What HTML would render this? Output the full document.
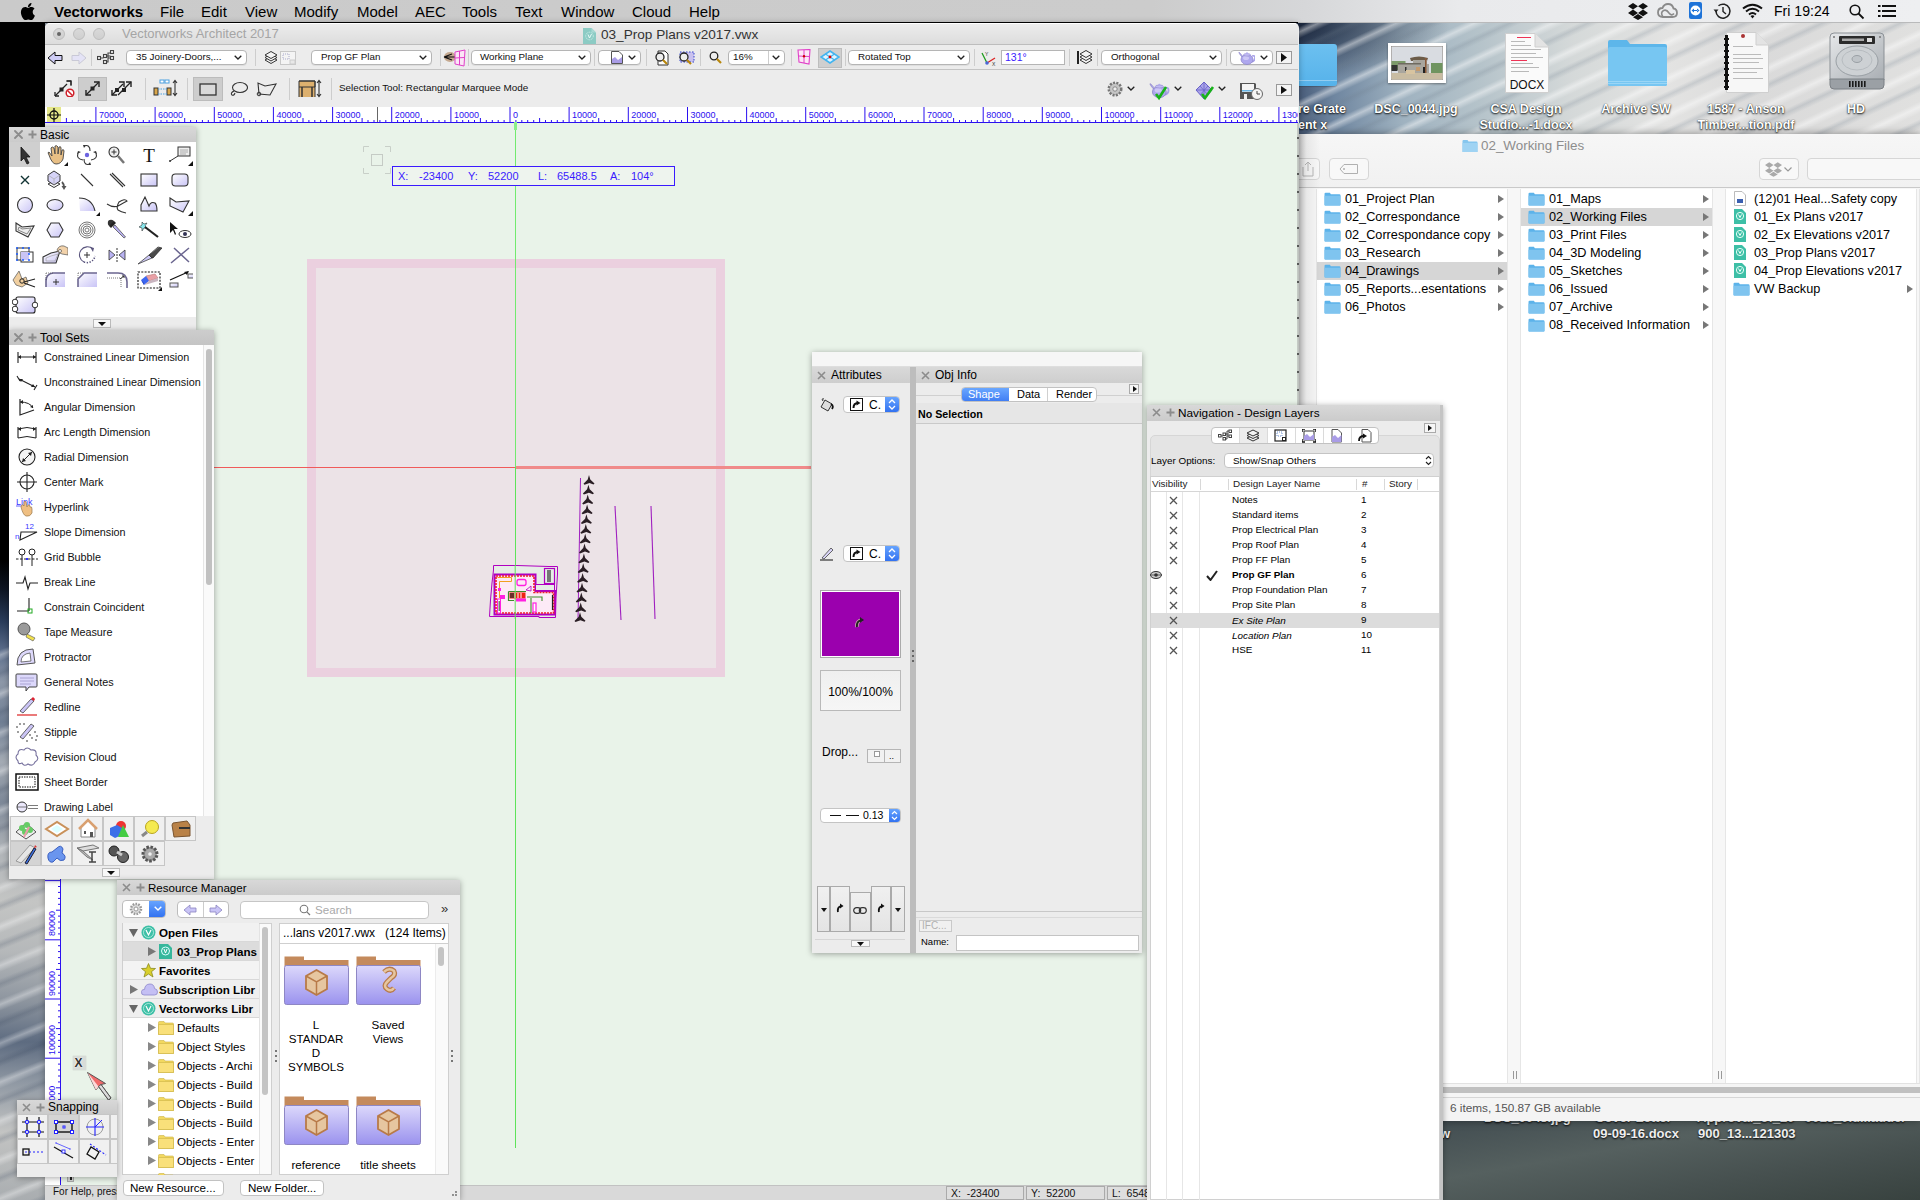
<!DOCTYPE html>
<html><head><meta charset="utf-8">
<style>
*{margin:0;padding:0;box-sizing:border-box}
html,body{width:1920px;height:1200px;overflow:hidden}
body{position:relative;font-family:"Liberation Sans",sans-serif;font-size:12px;color:#000;background:#6f7b86}
.a{position:absolute}
.t{position:absolute;white-space:nowrap;line-height:1}
.pal{position:absolute;background:#ececec;box-shadow:0 1px 6px rgba(0,0,0,.35);overflow:hidden}
.pt{position:absolute;left:0;top:0;right:0;height:15px;background:linear-gradient(#d8d8d8,#cbcbcb)}
.pt .x{position:absolute;left:5px;top:3px}
.pt .p{position:absolute;left:19px;top:3px}
.pt .n{position:absolute;left:31px;top:1px;font-size:12px;line-height:14px;white-space:nowrap}
.pop{position:absolute;background:#fff;border:1px solid #b5b5b5;border-radius:4px;box-shadow:0 1px 0 rgba(0,0,0,.06);font-size:11px;line-height:12px;white-space:nowrap}
.chev{position:absolute;width:6px;height:6px;border-right:1.4px solid #222;border-bottom:1.4px solid #222;transform:rotate(45deg)}
.sep{position:absolute;width:1px;background:#cfcfcf}
</style></head><body>

<!-- DESKTOP -->
<div class="a" style="left:0;top:0;width:1920px;height:1200px;background:linear-gradient(180deg,#8f9aa5 0%,#7f8b96 50%,#58646c 100%)"></div>
<div class="a" style="left:0;top:22px;width:45px;height:1178px;background:linear-gradient(180deg,#000 0px,#000 538px,#0e1624 568px,#2a3d5c 600px,#5d6f8c 630px,#8d98a8 660px,#6f7e93 700px,#a4abb4 740px,#7d8898 780px,#b0b4b8 830px,#c4c5c4 880px,#b5b8ba 930px,#8c949e 980px,#5d6b80 1020px,#8f98a3 1060px,#c3c4c3 1110px,#a9adb0 1178px)"></div>
<div class="a" style="left:0;top:640px;width:45px;height:560px;background:repeating-linear-gradient(158deg,rgba(255,255,255,0) 0px,rgba(255,255,255,0) 9px,rgba(255,255,255,.35) 14px,rgba(255,255,255,0) 20px,rgba(40,55,80,0) 26px,rgba(40,55,80,.18) 31px,rgba(40,55,80,0) 36px)"></div>
<!-- top right desktop clouds -->
<div class="a" style="left:1290px;top:22px;width:630px;height:115px;background:linear-gradient(90deg,#3f5270 0%,#6f86a0 7%,#9fb2c0 18%,#b5c3ca 30%,#d5d9d9 45%,#e3e3e2 60%,#dadada 75%,#e0e0df 100%)"></div>
<div class="a" style="left:1290px;top:22px;width:630px;height:115px;background:radial-gradient(ellipse 160px 60px at 0 0,rgba(15,25,45,.85),rgba(15,25,45,0))"></div>
<div class="a" style="left:1290px;top:22px;width:630px;height:115px;background:repeating-linear-gradient(155deg,rgba(255,255,255,0) 0px,rgba(255,255,255,0) 8px,rgba(255,255,255,.45) 13px,rgba(255,255,255,0) 19px,rgba(110,125,140,0) 24px,rgba(110,125,140,.22) 28px,rgba(110,125,140,0) 33px)"></div>
<!-- bottom right desktop dark -->
<div class="a" style="left:1440px;top:1110px;width:480px;height:90px;background:linear-gradient(170deg,#3f4a4f 0%,#55605f 40%,#46504f 70%,#38423f 100%)"></div>
<div class="t" style="left:1593px;top:1127px;font-size:13px;font-weight:bold;color:#eee;text-shadow:0 1px 2px #000">09-09-16.docx</div>
<div class="t" style="left:1698px;top:1127px;font-size:13px;font-weight:bold;color:#eee;text-shadow:0 1px 2px #000">900_13...121303</div>
<div class="t" style="left:1440px;top:1127px;font-size:13px;font-weight:bold;color:#eee;text-shadow:0 1px 2px #000">w</div>
<div class="t" style="left:1484px;top:1111px;font-size:13px;font-weight:bold;color:#eee;text-shadow:0 1px 2px #000">DSC_0045.jpg</div>
<div class="t" style="left:1595px;top:1111px;font-size:13px;font-weight:bold;color:#eee;text-shadow:0 1px 2px #000">Cover Letter</div>
<div class="t" style="left:1697px;top:1111px;font-size:13px;font-weight:bold;color:#eee;text-shadow:0 1px 2px #000">Approval_of_20</div>
<div class="t" style="left:1805px;top:1111px;font-size:13px;font-weight:bold;color:#eee;text-shadow:0 1px 2px #000">0013_0lu..ladder</div>

<!-- MENU BAR -->
<div class="a" style="left:0;top:0;width:1920px;height:22px;background:linear-gradient(90deg,#cacaca 0%,#cccccc 60%,#d6d7d9 68%,#e9eaec 76%,#eeeff1 100%)"></div>
<div class="a" style="left:0;top:22px;width:1298px;height:1px;background:#000"></div>
<div class="a" style="left:1298px;top:22px;width:622px;height:1px;background:#b9babb"></div>
<svg class="a" style="left:20px;top:3px" width="16" height="17" viewBox="0 0 170 200"><path d="M140 106c0-25 21-37 22-38-12-17-30-20-37-20-16-2-31 9-39 9-8 0-20-9-34-9-17 0-33 10-42 26-18 31-5 77 13 102 9 12 19 26 32 26 13-1 18-8 33-8 16 0 20 8 34 8 14 0 23-13 31-25 10-14 14-28 14-29-1 0-27-10-27-42zM115 32c7-9 12-21 11-33-10 0-23 7-30 16-7 8-13 20-11 32 12 1 23-6 30-15z" fill="#000"/></svg>
<div class="t" style="left:54px;top:4px;font-size:15px;font-weight:bold">Vectorworks</div>
<div class="t" style="left:160px;top:4px;font-size:15px">File</div>
<div class="t" style="left:201px;top:4px;font-size:15px">Edit</div>
<div class="t" style="left:245px;top:4px;font-size:15px">View</div>
<div class="t" style="left:294px;top:4px;font-size:15px">Modify</div>
<div class="t" style="left:357px;top:4px;font-size:15px">Model</div>
<div class="t" style="left:415px;top:4px;font-size:15px">AEC</div>
<div class="t" style="left:462px;top:4px;font-size:15px">Tools</div>
<div class="t" style="left:515px;top:4px;font-size:15px">Text</div>
<div class="t" style="left:561px;top:4px;font-size:15px">Window</div>
<div class="t" style="left:632px;top:4px;font-size:15px">Cloud</div>
<div class="t" style="left:689px;top:4px;font-size:15px">Help</div>
<!-- status icons -->
<svg class="a" style="left:1628px;top:3px" width="20" height="17" viewBox="0 0 20 17"><path d="M5 0 L0 3.3 L5 6.6 L10 3.3Z M15 0 L10 3.3 L15 6.6 L20 3.3Z M0 10 L5 13.3 L10 10 L5 6.6Z M10 10 L15 13.3 L20 10 L15 6.6Z M5 14.3 L10 17 L15 14.3 L10 11Z" fill="#111"/></svg>
<svg class="a" style="left:1657px;top:3px" width="21" height="16" viewBox="0 0 21 16"><path d="M6 14 Q1 14 1 9.5 Q1 5 5.5 5 Q7 1 11 1 Q15.5 1 16.5 5.5 Q20 6 20 10 Q20 14 15.5 14Z" fill="none" stroke="#8a8a8a" stroke-width="1.8"/><path d="M6 14 Q3 9.5 6.5 7.5 Q9.5 6 12 10 Q14.5 13.5 17 10.5" fill="none" stroke="#8a8a8a" stroke-width="1.6"/></svg>
<svg class="a" style="left:1689px;top:2px" width="14" height="18" viewBox="0 0 14 18"><rect x="0" y="0" width="13" height="17" rx="2" fill="#1e73d8"/><ellipse cx="6.5" cy="8.5" rx="5" ry="5" fill="#fff"/><path d="M2.5 8.5 L5 6.5 V10.5Z M10.5 8.5 L8 6.5 V10.5Z M4.5 8 H8.5 V9 H4.5Z" fill="#1e73d8"/></svg>
<svg class="a" style="left:1712px;top:2px" width="20" height="18" viewBox="0 0 20 18"><path d="M4 9 A7 7 0 1 0 6.5 3.8" fill="none" stroke="#222" stroke-width="1.5"/><path d="M1.5 7.5 L4 10.5 L6.5 7.5Z" fill="#222"/><path d="M11 5 V9.5 L14 12" fill="none" stroke="#222" stroke-width="1.4"/></svg>
<svg class="a" style="left:1742px;top:3px" width="21" height="16" viewBox="0 0 21 16"><path d="M1 5.5 Q10.5 -2 20 5.5" fill="none" stroke="#111" stroke-width="2"/><path d="M4 8.5 Q10.5 3 17 8.5" fill="none" stroke="#111" stroke-width="2"/><path d="M7 11.5 Q10.5 8.5 14 11.5" fill="none" stroke="#111" stroke-width="2"/><path d="M8.5 13 L10.5 15.5 L12.5 13 Q10.5 11.5 8.5 13Z" fill="#111"/></svg>
<div class="t" style="left:1774px;top:4px;font-size:14.1px">Fri 19:24</div>
<svg class="a" style="left:1849px;top:4px" width="16" height="16" viewBox="0 0 16 16"><circle cx="6" cy="6" r="4.8" fill="none" stroke="#111" stroke-width="1.6"/><path d="M9.5 9.5 L14.5 14.5" stroke="#111" stroke-width="1.8"/></svg>
<svg class="a" style="left:1878px;top:5px" width="20" height="12" viewBox="0 0 20 12"><rect x="0" y="0" width="2.5" height="2" fill="#111"/><rect x="4" y="0" width="14" height="2" fill="#111"/><rect x="0" y="5" width="2.5" height="2" fill="#111"/><rect x="4" y="5" width="14" height="2" fill="#111"/><rect x="0" y="10" width="2.5" height="2" fill="#111"/><rect x="4" y="10" width="14" height="2" fill="#111"/></svg>

<!-- DESKTOP ICONS TOP RIGHT -->
<div class="a" style="left:1298px;top:44px;width:39px;height:42px;background:linear-gradient(#6cc0f0,#56b2ea);border-radius:0 3px 3px 0;box-shadow:0 1px 1px rgba(0,0,0,.2)"></div>
<div class="a" style="left:1298px;top:80px;width:39px;height:1px;background:rgba(255,255,255,.35)"></div>
<div class="a" style="left:1388px;top:43px;width:58px;height:40px;background:#fff;box-shadow:0 1px 2px rgba(0,0,0,.4)"></div>
<svg class="a" style="left:1391px;top:46px" width="52" height="34" viewBox="0 0 52 34"><rect x="0" y="0" width="52" height="34" fill="#8a857c"/><rect x="0.5" y="0.5" width="51" height="33" fill="#d9dce1"/><rect x="0.5" y="15" width="14" height="9" fill="#7c9a6a"/><rect x="40" y="17" width="11.5" height="10" fill="#6f9460"/><path d="M19 12 Q28 9 37 12 L36 15 L20 15Z" fill="#6c5c48"/><rect x="22" y="14" width="14" height="9" fill="#a8a59d"/><rect x="7" y="18" width="31" height="10" fill="#a9a69e"/><rect x="7" y="17" width="23" height="1.5" fill="#6f6a60"/><rect x="14" y="21" width="1.5" height="4" fill="#333"/><rect x="32" y="21" width="2" height="6" fill="#222"/><rect x="25" y="21" width="4" height="4" fill="#c49a6c"/><rect x="34" y="12" width="1.5" height="15" fill="#8a5a3a"/><rect x="0.5" y="19" width="6" height="6" fill="#333"/><rect x="0.5" y="27" width="51" height="6.5" fill="#c9bca2"/><rect x="15" y="24" width="9" height="4" fill="#d8c4a0"/></svg>
<svg class="a" style="left:1505px;top:33px" width="44" height="60" viewBox="0 0 44 60"><path d="M0.5 0.5 H30 L43.5 14 V59.5 H0.5Z" fill="#fafafa" stroke="#cfcfcf"/><path d="M30 0.5 V14 H43.5" fill="#e3e3e3" stroke="#cfcfcf"/><g fill="#b9b9b9"><rect x="6" y="8" width="14" height="1"/><rect x="6" y="12" width="20" height="1"/><rect x="6" y="16" width="30" height="1"/><rect x="6" y="20" width="25" height="1"/><rect x="6" y="24" width="32" height="1"/><rect x="6" y="30" width="22" height="1"/><rect x="6" y="34" width="28" height="1"/><rect x="6" y="38" width="18" height="1"/></g><rect x="12" y="4" width="14" height="1" fill="#e35"/><rect x="6" y="27" width="16" height="1" fill="#e35"/><text x="22" y="56" font-size="12" text-anchor="middle" font-family="Liberation Sans" fill="#111">DOCX</text></svg>
<svg class="a" style="left:1607px;top:39px" width="61" height="48" viewBox="0 0 61 48"><path d="M1 3 Q1 1 3 1 H20 L23 5 H58 Q60 5 60 7 V45 Q60 47 58 47 H3 Q1 47 1 45Z" fill="#5db6ea"/><path d="M1 10 Q1 8 3 8 H58 Q60 8 60 10 V45 Q60 47 58 47 H3 Q1 47 1 45Z" fill="#77c6f2"/><rect x="1" y="42" width="59" height="1" fill="#9ad6f6"/><rect x="1" y="44" width="59" height="1" fill="#9ad6f6"/></svg>
<svg class="a" style="left:1724px;top:32px" width="45" height="61" viewBox="0 0 45 61"><path d="M2.5 0.5 H32 L44.5 13 V60.5 H2.5Z" fill="#f7f7f7" stroke="#cfcfcf"/><path d="M32 0.5 V13 H44.5" fill="#e3e3e3" stroke="#cfcfcf"/><rect x="1" y="3" width="3" height="55" fill="#111"/><g fill="#111"><rect x="0" y="6" width="5" height="2"/><rect x="0" y="12" width="5" height="2"/><rect x="0" y="18" width="5" height="2"/><rect x="0" y="24" width="5" height="2"/><rect x="0" y="30" width="5" height="2"/><rect x="0" y="36" width="5" height="2"/><rect x="0" y="42" width="5" height="2"/><rect x="0" y="48" width="5" height="2"/><rect x="0" y="54" width="5" height="2"/></g><g fill="#bbb"><rect x="9" y="14" width="20" height="1"/><rect x="9" y="22" width="28" height="1"/><rect x="9" y="26" width="30" height="1"/><rect x="9" y="30" width="26" height="1"/><rect x="9" y="36" width="30" height="1"/><rect x="9" y="40" width="24" height="1"/><rect x="9" y="46" width="30" height="1"/></g><circle cx="19" cy="4" r="2" fill="#a33"/></svg>
<svg class="a" style="left:1829px;top:32px" width="56" height="58" viewBox="0 0 56 58"><defs><linearGradient id="hdg" x1="0" y1="0" x2="1" y2="1"><stop offset="0" stop-color="#e6e8ea"/><stop offset="1" stop-color="#a9aeb3"/></linearGradient></defs><path d="M5 1 H51 Q55 1 55 5 V48 H1 V5 Q1 1 5 1Z" fill="url(#hdg)" stroke="#8b9095"/><path d="M1 47 H55 V53 Q55 57 51 57 H5 Q1 57 1 53Z" fill="#9ba0a5" stroke="#7b8085"/><rect x="10" y="4" width="36" height="8" rx="1" fill="#2b2b2b"/><rect x="13" y="6.5" width="22" height="2.5" fill="#aaa"/><rect x="38" y="6" width="5" height="4" fill="#ddd"/><ellipse cx="28" cy="29" rx="21" ry="15" fill="#cdd1d4" stroke="#9aa0a5"/><ellipse cx="28" cy="28" rx="15" ry="10" fill="none" stroke="#b7bcc0"/><ellipse cx="28" cy="27" rx="5" ry="3.5" fill="#bfc4c8" stroke="#9aa0a5"/><g fill="#1a1a1a"><rect x="20" y="49" width="1.6" height="6"/><rect x="23" y="49" width="1.6" height="6"/><rect x="26" y="49" width="1.6" height="6"/><rect x="29" y="49" width="1.6" height="6"/><rect x="32" y="49" width="1.6" height="6"/><rect x="35" y="49" width="1.6" height="6"/></g><circle cx="5" cy="5" r="1" fill="#777"/><circle cx="51" cy="5" r="1" fill="#777"/></svg>
<div class="t" style="left:1298px;top:103px;color:#fff;font-weight:bold;font-size:12.5px;text-shadow:0 1px 2px rgba(0,0,0,.9),0 0 1px rgba(0,0,0,.8)">re Grate</div>
<div class="t" style="left:1298px;top:119px;color:#fff;font-weight:bold;font-size:12.5px;text-shadow:0 1px 2px rgba(0,0,0,.9),0 0 1px rgba(0,0,0,.8)">ent x</div>
<div class="t" style="left:1316px;top:103px;width:200px;text-align:center;color:#fff;font-weight:bold;font-size:12.5px;text-shadow:0 1px 2px rgba(0,0,0,.9),0 0 1px rgba(0,0,0,.8)">DSC_0044.jpg</div>
<div class="t" style="left:1426px;top:103px;width:200px;text-align:center;color:#fff;font-weight:bold;font-size:12.5px;text-shadow:0 1px 2px rgba(0,0,0,.9),0 0 1px rgba(0,0,0,.8)">CSA Design</div>
<div class="t" style="left:1426px;top:119px;width:200px;text-align:center;color:#fff;font-weight:bold;font-size:12.5px;text-shadow:0 1px 2px rgba(0,0,0,.9),0 0 1px rgba(0,0,0,.8)">Studio...-1.docx</div>
<div class="t" style="left:1536px;top:103px;width:200px;text-align:center;color:#fff;font-weight:bold;font-size:12.5px;text-shadow:0 1px 2px rgba(0,0,0,.9),0 0 1px rgba(0,0,0,.8)">Archive SW</div>
<div class="t" style="left:1646px;top:103px;width:200px;text-align:center;color:#fff;font-weight:bold;font-size:12.5px;text-shadow:0 1px 2px rgba(0,0,0,.9),0 0 1px rgba(0,0,0,.8)">1587 - Anson</div>
<div class="t" style="left:1646px;top:119px;width:200px;text-align:center;color:#fff;font-weight:bold;font-size:12.5px;text-shadow:0 1px 2px rgba(0,0,0,.9),0 0 1px rgba(0,0,0,.8)">Timber...tion.pdf</div>
<div class="t" style="left:1756px;top:103px;width:200px;text-align:center;color:#fff;font-weight:bold;font-size:12.5px;text-shadow:0 1px 2px rgba(0,0,0,.9),0 0 1px rgba(0,0,0,.8)">HD</div>
<!-- FINDER -->
<div class="a" style="left:1298px;top:134px;width:622px;height:987px;background:#f6f6f6;box-shadow:0 0 8px rgba(0,0,0,.4)">
<div class="a" style="left:0;top:0;width:622px;height:54px;background:linear-gradient(#f6f6f6,#f1f1f1);border-bottom:1px solid #c9c9c9"></div>
<svg class="a" style="left:164px;top:5px" width="16" height="14" viewBox="0 0 16 13"><path d="M0.5 1.5 Q0.5 0.5 1.5 0.5 H5.5 L6.5 2 H14.5 Q15.5 2 15.5 3 V12 Q15.5 12.5 15 12.5 H1 Q0.5 12.5 0.5 12Z" fill="#86c6ee"/><path d="M0.5 3.5 H15.5 V12 Q15.5 12.5 15 12.5 H1 Q0.5 12.5 0.5 12Z" fill="#9fd3f3"/></svg>
<div class="t" style="left:183px;top:5px;font-size:13.4px;color:#8d8d8d">02_Working Files</div>
<div class="a" style="left:-10px;top:24px;width:32px;height:22px;border:1px solid #d6d6d6;border-radius:4px;background:#f8f8f8"></div>
<svg class="a" style="left:4px;top:27px" width="12" height="16" viewBox="0 0 12 16"><path d="M1 6 V15 H11 V6" fill="none" stroke="#b8b8b8"/><path d="M6 1 V10 M3 4 L6 1 L9 4" fill="none" stroke="#b8b8b8"/></svg>
<div class="a" style="left:31px;top:24px;width:40px;height:22px;border:1px solid #d6d6d6;border-radius:4px;background:#f8f8f8"></div>
<svg class="a" style="left:41px;top:29px" width="20" height="12" viewBox="0 0 20 12"><path d="M5 1.5 H18.5 V10.5 H5 L1 6Z" fill="none" stroke="#b0b0b0" stroke-width="1"/><circle cx="5" cy="6" r="1" fill="#b0b0b0"/></svg>
<div class="a" style="left:461px;top:24px;width:40px;height:22px;border:1px solid #d6d6d6;border-radius:4px;background:#f8f8f8"></div>
<svg class="a" style="left:467px;top:28px" width="17" height="15" viewBox="0 0 20 17"><path d="M5 0 L0 3.3 L5 6.6 L10 3.3Z M15 0 L10 3.3 L15 6.6 L20 3.3Z M0 10 L5 13.3 L10 10 L5 6.6Z M10 10 L15 13.3 L20 10 L15 6.6Z M5 14.3 L10 17 L15 14.3 L10 11Z" fill="#a9a9a9"/></svg>
<svg class="a" style="left:486px;top:33px" width="8" height="5" viewBox="0 0 8 5"><path d="M0.5 0.5 L4 4 L7.5 0.5" fill="none" stroke="#999" stroke-width="1.2"/></svg>
<div class="a" style="left:509px;top:24px;width:130px;height:22px;border:1px solid #d6d6d6;border-radius:4px;background:#f8f8f8"></div>
<div class="a" style="left:0;top:55px;width:622px;height:894px;background:#fff"></div>
<div class="a" style="left:0px;top:55px;width:19px;height:894px;background:#f7f7f7;border-left:1px solid #e6e6e6;border-right:1px solid #e6e6e6"></div>
<div class="a" style="left:209px;top:55px;width:14px;height:894px;background:#f7f7f7;border-left:1px solid #e6e6e6;border-right:1px solid #e6e6e6"></div>
<div class="a" style="left:414px;top:55px;width:14px;height:894px;background:#f7f7f7;border-left:1px solid #e6e6e6;border-right:1px solid #e6e6e6"></div>
<div class="a" style="left:618px;top:55px;width:4px;height:894px;background:#f7f7f7;border-left:1px solid #e6e6e6;border-right:1px solid #e6e6e6"></div>
<div class="a" style="left:215px;top:937px;width:1px;height:8px;background:#999"></div><div class="a" style="left:218px;top:937px;width:1px;height:8px;background:#999"></div>
<div class="a" style="left:420px;top:937px;width:1px;height:8px;background:#999"></div><div class="a" style="left:423px;top:937px;width:1px;height:8px;background:#999"></div>
<div class="a" style="left:0;top:949px;width:622px;height:14px;background:#f5f5f5;border-top:1px solid #e2e2e2"></div>
<div class="a" style="left:0;top:953px;width:622px;height:6px;background:#c0c0c0"></div>
<div class="a" style="left:0;top:963px;width:622px;height:24px;background:#f4f4f4;border-top:1px solid #d6d6d6"></div>
<div class="t" style="left:152px;top:969px;font-size:11.8px;color:#555">6 items, 150.87 GB available</div>
<svg class="a" style="left:26px;top:58px" width="17" height="14" viewBox="0 0 16 13"><path d="M0.5 1.5 Q0.5 0.5 1.5 0.5 H5.5 L6.5 2 H14.5 Q15.5 2 15.5 3 V12 Q15.5 12.5 15 12.5 H1 Q0.5 12.5 0.5 12Z" fill="#5cb3ea"/><path d="M0.5 3.5 H15.5 V12 Q15.5 12.5 15 12.5 H1 Q0.5 12.5 0.5 12Z" fill="#7fc4ef"/></svg>
<div class="t" style="left:47px;top:59px;font-size:12.7px">01_Project Plan</div>
<svg class="a" style="left:200px;top:61px" width="6" height="8" viewBox="0 0 6 8"><path d="M0 0 L6 4 L0 8Z" fill="#777"/></svg>
<svg class="a" style="left:26px;top:76px" width="17" height="14" viewBox="0 0 16 13"><path d="M0.5 1.5 Q0.5 0.5 1.5 0.5 H5.5 L6.5 2 H14.5 Q15.5 2 15.5 3 V12 Q15.5 12.5 15 12.5 H1 Q0.5 12.5 0.5 12Z" fill="#5cb3ea"/><path d="M0.5 3.5 H15.5 V12 Q15.5 12.5 15 12.5 H1 Q0.5 12.5 0.5 12Z" fill="#7fc4ef"/></svg>
<div class="t" style="left:47px;top:77px;font-size:12.7px">02_Correspondance</div>
<svg class="a" style="left:200px;top:79px" width="6" height="8" viewBox="0 0 6 8"><path d="M0 0 L6 4 L0 8Z" fill="#777"/></svg>
<svg class="a" style="left:26px;top:94px" width="17" height="14" viewBox="0 0 16 13"><path d="M0.5 1.5 Q0.5 0.5 1.5 0.5 H5.5 L6.5 2 H14.5 Q15.5 2 15.5 3 V12 Q15.5 12.5 15 12.5 H1 Q0.5 12.5 0.5 12Z" fill="#5cb3ea"/><path d="M0.5 3.5 H15.5 V12 Q15.5 12.5 15 12.5 H1 Q0.5 12.5 0.5 12Z" fill="#7fc4ef"/></svg>
<div class="t" style="left:47px;top:95px;font-size:12.7px">02_Correspondance copy</div>
<svg class="a" style="left:200px;top:97px" width="6" height="8" viewBox="0 0 6 8"><path d="M0 0 L6 4 L0 8Z" fill="#777"/></svg>
<svg class="a" style="left:26px;top:112px" width="17" height="14" viewBox="0 0 16 13"><path d="M0.5 1.5 Q0.5 0.5 1.5 0.5 H5.5 L6.5 2 H14.5 Q15.5 2 15.5 3 V12 Q15.5 12.5 15 12.5 H1 Q0.5 12.5 0.5 12Z" fill="#5cb3ea"/><path d="M0.5 3.5 H15.5 V12 Q15.5 12.5 15 12.5 H1 Q0.5 12.5 0.5 12Z" fill="#7fc4ef"/></svg>
<div class="t" style="left:47px;top:113px;font-size:12.7px">03_Research</div>
<svg class="a" style="left:200px;top:115px" width="6" height="8" viewBox="0 0 6 8"><path d="M0 0 L6 4 L0 8Z" fill="#777"/></svg>
<div class="a" style="left:19px;top:128px;width:190px;height:18px;background:#d6d6d6"></div>
<svg class="a" style="left:26px;top:130px" width="17" height="14" viewBox="0 0 16 13"><path d="M0.5 1.5 Q0.5 0.5 1.5 0.5 H5.5 L6.5 2 H14.5 Q15.5 2 15.5 3 V12 Q15.5 12.5 15 12.5 H1 Q0.5 12.5 0.5 12Z" fill="#5cb3ea"/><path d="M0.5 3.5 H15.5 V12 Q15.5 12.5 15 12.5 H1 Q0.5 12.5 0.5 12Z" fill="#7fc4ef"/></svg>
<div class="t" style="left:47px;top:131px;font-size:12.7px">04_Drawings</div>
<svg class="a" style="left:200px;top:133px" width="6" height="8" viewBox="0 0 6 8"><path d="M0 0 L6 4 L0 8Z" fill="#777"/></svg>
<svg class="a" style="left:26px;top:148px" width="17" height="14" viewBox="0 0 16 13"><path d="M0.5 1.5 Q0.5 0.5 1.5 0.5 H5.5 L6.5 2 H14.5 Q15.5 2 15.5 3 V12 Q15.5 12.5 15 12.5 H1 Q0.5 12.5 0.5 12Z" fill="#5cb3ea"/><path d="M0.5 3.5 H15.5 V12 Q15.5 12.5 15 12.5 H1 Q0.5 12.5 0.5 12Z" fill="#7fc4ef"/></svg>
<div class="t" style="left:47px;top:149px;font-size:12.7px">05_Reports...esentations</div>
<svg class="a" style="left:200px;top:151px" width="6" height="8" viewBox="0 0 6 8"><path d="M0 0 L6 4 L0 8Z" fill="#777"/></svg>
<svg class="a" style="left:26px;top:166px" width="17" height="14" viewBox="0 0 16 13"><path d="M0.5 1.5 Q0.5 0.5 1.5 0.5 H5.5 L6.5 2 H14.5 Q15.5 2 15.5 3 V12 Q15.5 12.5 15 12.5 H1 Q0.5 12.5 0.5 12Z" fill="#5cb3ea"/><path d="M0.5 3.5 H15.5 V12 Q15.5 12.5 15 12.5 H1 Q0.5 12.5 0.5 12Z" fill="#7fc4ef"/></svg>
<div class="t" style="left:47px;top:167px;font-size:12.7px">06_Photos</div>
<svg class="a" style="left:200px;top:169px" width="6" height="8" viewBox="0 0 6 8"><path d="M0 0 L6 4 L0 8Z" fill="#777"/></svg>
<svg class="a" style="left:230px;top:58px" width="17" height="14" viewBox="0 0 16 13"><path d="M0.5 1.5 Q0.5 0.5 1.5 0.5 H5.5 L6.5 2 H14.5 Q15.5 2 15.5 3 V12 Q15.5 12.5 15 12.5 H1 Q0.5 12.5 0.5 12Z" fill="#5cb3ea"/><path d="M0.5 3.5 H15.5 V12 Q15.5 12.5 15 12.5 H1 Q0.5 12.5 0.5 12Z" fill="#7fc4ef"/></svg>
<div class="t" style="left:251px;top:59px;font-size:12.7px">01_Maps</div>
<svg class="a" style="left:405px;top:61px" width="6" height="8" viewBox="0 0 6 8"><path d="M0 0 L6 4 L0 8Z" fill="#777"/></svg>
<div class="a" style="left:223px;top:74px;width:191px;height:18px;background:#d6d6d6"></div>
<svg class="a" style="left:230px;top:76px" width="17" height="14" viewBox="0 0 16 13"><path d="M0.5 1.5 Q0.5 0.5 1.5 0.5 H5.5 L6.5 2 H14.5 Q15.5 2 15.5 3 V12 Q15.5 12.5 15 12.5 H1 Q0.5 12.5 0.5 12Z" fill="#5cb3ea"/><path d="M0.5 3.5 H15.5 V12 Q15.5 12.5 15 12.5 H1 Q0.5 12.5 0.5 12Z" fill="#7fc4ef"/></svg>
<div class="t" style="left:251px;top:77px;font-size:12.7px">02_Working Files</div>
<svg class="a" style="left:405px;top:79px" width="6" height="8" viewBox="0 0 6 8"><path d="M0 0 L6 4 L0 8Z" fill="#777"/></svg>
<svg class="a" style="left:230px;top:94px" width="17" height="14" viewBox="0 0 16 13"><path d="M0.5 1.5 Q0.5 0.5 1.5 0.5 H5.5 L6.5 2 H14.5 Q15.5 2 15.5 3 V12 Q15.5 12.5 15 12.5 H1 Q0.5 12.5 0.5 12Z" fill="#5cb3ea"/><path d="M0.5 3.5 H15.5 V12 Q15.5 12.5 15 12.5 H1 Q0.5 12.5 0.5 12Z" fill="#7fc4ef"/></svg>
<div class="t" style="left:251px;top:95px;font-size:12.7px">03_Print Files</div>
<svg class="a" style="left:405px;top:97px" width="6" height="8" viewBox="0 0 6 8"><path d="M0 0 L6 4 L0 8Z" fill="#777"/></svg>
<svg class="a" style="left:230px;top:112px" width="17" height="14" viewBox="0 0 16 13"><path d="M0.5 1.5 Q0.5 0.5 1.5 0.5 H5.5 L6.5 2 H14.5 Q15.5 2 15.5 3 V12 Q15.5 12.5 15 12.5 H1 Q0.5 12.5 0.5 12Z" fill="#5cb3ea"/><path d="M0.5 3.5 H15.5 V12 Q15.5 12.5 15 12.5 H1 Q0.5 12.5 0.5 12Z" fill="#7fc4ef"/></svg>
<div class="t" style="left:251px;top:113px;font-size:12.7px">04_3D Modeling</div>
<svg class="a" style="left:405px;top:115px" width="6" height="8" viewBox="0 0 6 8"><path d="M0 0 L6 4 L0 8Z" fill="#777"/></svg>
<svg class="a" style="left:230px;top:130px" width="17" height="14" viewBox="0 0 16 13"><path d="M0.5 1.5 Q0.5 0.5 1.5 0.5 H5.5 L6.5 2 H14.5 Q15.5 2 15.5 3 V12 Q15.5 12.5 15 12.5 H1 Q0.5 12.5 0.5 12Z" fill="#5cb3ea"/><path d="M0.5 3.5 H15.5 V12 Q15.5 12.5 15 12.5 H1 Q0.5 12.5 0.5 12Z" fill="#7fc4ef"/></svg>
<div class="t" style="left:251px;top:131px;font-size:12.7px">05_Sketches</div>
<svg class="a" style="left:405px;top:133px" width="6" height="8" viewBox="0 0 6 8"><path d="M0 0 L6 4 L0 8Z" fill="#777"/></svg>
<svg class="a" style="left:230px;top:148px" width="17" height="14" viewBox="0 0 16 13"><path d="M0.5 1.5 Q0.5 0.5 1.5 0.5 H5.5 L6.5 2 H14.5 Q15.5 2 15.5 3 V12 Q15.5 12.5 15 12.5 H1 Q0.5 12.5 0.5 12Z" fill="#5cb3ea"/><path d="M0.5 3.5 H15.5 V12 Q15.5 12.5 15 12.5 H1 Q0.5 12.5 0.5 12Z" fill="#7fc4ef"/></svg>
<div class="t" style="left:251px;top:149px;font-size:12.7px">06_Issued</div>
<svg class="a" style="left:405px;top:151px" width="6" height="8" viewBox="0 0 6 8"><path d="M0 0 L6 4 L0 8Z" fill="#777"/></svg>
<svg class="a" style="left:230px;top:166px" width="17" height="14" viewBox="0 0 16 13"><path d="M0.5 1.5 Q0.5 0.5 1.5 0.5 H5.5 L6.5 2 H14.5 Q15.5 2 15.5 3 V12 Q15.5 12.5 15 12.5 H1 Q0.5 12.5 0.5 12Z" fill="#5cb3ea"/><path d="M0.5 3.5 H15.5 V12 Q15.5 12.5 15 12.5 H1 Q0.5 12.5 0.5 12Z" fill="#7fc4ef"/></svg>
<div class="t" style="left:251px;top:167px;font-size:12.7px">07_Archive</div>
<svg class="a" style="left:405px;top:169px" width="6" height="8" viewBox="0 0 6 8"><path d="M0 0 L6 4 L0 8Z" fill="#777"/></svg>
<svg class="a" style="left:230px;top:184px" width="17" height="14" viewBox="0 0 16 13"><path d="M0.5 1.5 Q0.5 0.5 1.5 0.5 H5.5 L6.5 2 H14.5 Q15.5 2 15.5 3 V12 Q15.5 12.5 15 12.5 H1 Q0.5 12.5 0.5 12Z" fill="#5cb3ea"/><path d="M0.5 3.5 H15.5 V12 Q15.5 12.5 15 12.5 H1 Q0.5 12.5 0.5 12Z" fill="#7fc4ef"/></svg>
<div class="t" style="left:251px;top:185px;font-size:12.7px">08_Received Information</div>
<svg class="a" style="left:405px;top:187px" width="6" height="8" viewBox="0 0 6 8"><path d="M0 0 L6 4 L0 8Z" fill="#777"/></svg>
<svg class="a" style="left:436px;top:57px" width="12" height="15" viewBox="0 0 12 15"><path d="M0.5 0.5 H8 L11.5 4 V14.5 H0.5Z" fill="#fff" stroke="#bbb"/><rect x="3" y="8" width="6" height="4" fill="#3a5fb0"/></svg>
<div class="t" style="left:456px;top:59px;font-size:12.7px">(12)01 Heal...Safety copy</div>
<svg class="a" style="left:436px;top:75px" width="12" height="15" viewBox="0 0 12 15"><path d="M0 0 H8 L12 4 V15 H0Z" fill="#3dbfa6"/><circle cx="6" cy="7" r="3.6" fill="none" stroke="#e8fff8" stroke-width="1"/><path d="M4.5 5.5 L6 8.5 L7.5 5.5" fill="none" stroke="#e8fff8" stroke-width="1"/></svg>
<div class="t" style="left:456px;top:77px;font-size:12.7px">01_Ex Plans v2017</div>
<svg class="a" style="left:436px;top:93px" width="12" height="15" viewBox="0 0 12 15"><path d="M0 0 H8 L12 4 V15 H0Z" fill="#3dbfa6"/><circle cx="6" cy="7" r="3.6" fill="none" stroke="#e8fff8" stroke-width="1"/><path d="M4.5 5.5 L6 8.5 L7.5 5.5" fill="none" stroke="#e8fff8" stroke-width="1"/></svg>
<div class="t" style="left:456px;top:95px;font-size:12.7px">02_Ex Elevations v2017</div>
<svg class="a" style="left:436px;top:111px" width="12" height="15" viewBox="0 0 12 15"><path d="M0 0 H8 L12 4 V15 H0Z" fill="#3dbfa6"/><circle cx="6" cy="7" r="3.6" fill="none" stroke="#e8fff8" stroke-width="1"/><path d="M4.5 5.5 L6 8.5 L7.5 5.5" fill="none" stroke="#e8fff8" stroke-width="1"/></svg>
<div class="t" style="left:456px;top:113px;font-size:12.7px">03_Prop Plans v2017</div>
<svg class="a" style="left:436px;top:129px" width="12" height="15" viewBox="0 0 12 15"><path d="M0 0 H8 L12 4 V15 H0Z" fill="#3dbfa6"/><circle cx="6" cy="7" r="3.6" fill="none" stroke="#e8fff8" stroke-width="1"/><path d="M4.5 5.5 L6 8.5 L7.5 5.5" fill="none" stroke="#e8fff8" stroke-width="1"/></svg>
<div class="t" style="left:456px;top:131px;font-size:12.7px">04_Prop Elevations v2017</div>
<svg class="a" style="left:435px;top:148px" width="17" height="14" viewBox="0 0 16 13"><path d="M0.5 1.5 Q0.5 0.5 1.5 0.5 H5.5 L6.5 2 H14.5 Q15.5 2 15.5 3 V12 Q15.5 12.5 15 12.5 H1 Q0.5 12.5 0.5 12Z" fill="#5cb3ea"/><path d="M0.5 3.5 H15.5 V12 Q15.5 12.5 15 12.5 H1 Q0.5 12.5 0.5 12Z" fill="#7fc4ef"/></svg>
<div class="t" style="left:456px;top:149px;font-size:12.7px">VW Backup</div>
<svg class="a" style="left:609px;top:151px" width="6" height="8" viewBox="0 0 6 8"><path d="M0 0 L6 4 L0 8Z" fill="#777"/></svg>
<div class="a" style="left:0;top:0;width:22px;height:987px;background:linear-gradient(90deg,rgba(0,0,0,.22),rgba(0,0,0,.06) 40%,rgba(0,0,0,0))"></div>
</div>
<!-- VW WINDOW -->
<div class="a" style="left:45px;top:23px;width:1254px;height:1177px;background:#ececec;border-radius:5px 5px 0 0;overflow:hidden;box-shadow:0 0 6px rgba(0,0,0,.3)">
<div class="a" style="left:0;top:0;width:1253px;height:22px;background:linear-gradient(#ececec,#dcdcdc);border-top:1px solid #fff"></div>
<div class="a" style="left:0;top:21px;width:1253px;height:1px;background:#bdbdbd"></div>
<div class="a" style="left:8px;top:4.5px;width:12px;height:12px;border-radius:50%;background:linear-gradient(#d9d9d9,#cfcfcf);border:1px solid #bdbdbd"></div>
<div class="a" style="left:28px;top:4.5px;width:12px;height:12px;border-radius:50%;background:linear-gradient(#d9d9d9,#cfcfcf);border:1px solid #bdbdbd"></div>
<div class="a" style="left:48px;top:4.5px;width:12px;height:12px;border-radius:50%;background:linear-gradient(#d9d9d9,#cfcfcf);border:1px solid #bdbdbd"></div>
<div class="a" style="left:12px;top:8.5px;width:4px;height:4px;border-radius:50%;background:#666"></div>
<div class="t" style="left:77px;top:4px;font-size:13px;color:#a5a5a5">Vectorworks Architect 2017</div>
<svg class="a" style="left:538px;top:5px" width="13" height="16" viewBox="0 0 13 16"><path d="M0 0 H8.5 L13 4.5 V16 H0Z" fill="#8ccbc4"/><path d="M8.5 0 V4.5 H13" fill="#a9d9d3"/><circle cx="6.5" cy="8" r="3.8" fill="none" stroke="#d8f3ef" stroke-width="0.8" stroke-dasharray="1 0.7"/><path d="M5 6.5 L6.5 10 L8.5 6" fill="none" stroke="#e9fbf8" stroke-width="1"/></svg>
<div class="t" style="left:556px;top:5px;font-size:13.6px;color:#333">03_Prop Plans v2017.vwx</div>
<div class="a" style="left:0;top:22px;width:1253px;height:25px;background:#ececec;border-bottom:1px solid #c4c4c4"></div>
<svg class="a" style="left:2px;top:28px" width="16" height="14" viewBox="0 0 16 14"><path d="M1 7 L8 1 V4.5 H15 V9.5 H8 V13Z" fill="#cfcdf6" stroke="#111" stroke-width="1"/></svg>
<svg class="a" style="left:26px;top:28px" width="16" height="14" viewBox="0 0 16 14"><path d="M15 7 L8 1 V4.5 H1 V9.5 H8 V13Z" fill="#e4e3f6" stroke="#c9c9d6" stroke-width="1"/></svg>
<div class="a" style="left:46px;top:26px;width:1px;height:17px;background:#cdcdcd"></div>
<svg class="a" style="left:52px;top:27px" width="18" height="16" viewBox="0 0 18 16"><g fill="none" stroke="#444" stroke-width="1.1"><rect x="0.5" y="6.5" width="3" height="3"/><rect x="6.5" y="4.5" width="3" height="3"/><rect x="6.5" y="10.5" width="3" height="3"/><rect x="13.5" y="0.5" width="3" height="3"/><rect x="13.5" y="6.5" width="3" height="3"/><path d="M3.5 8 H6.5 M9.5 6 H13.5 M9.5 12 H11 V3 H13.5 M11 8 H13.5"/></g></svg>
<div class="pop" style="left:81px;top:27px;width:121px;height:15px"></div><div class="t" style="left:91px;top:29px;font-size:9.8px;color:#111">35 Joinery-Doors,...</div><svg class="a" style="left:189px;top:32px" width="8" height="5" viewBox="0 0 8 5"><path d="M0.7 0.7 L4 4 L7.3 0.7" fill="none" stroke="#222" stroke-width="1.3"/></svg>
<div class="a" style="left:210px;top:26px;width:1px;height:17px;background:#cdcdcd"></div>
<svg class="a" style="left:219px;top:28px" width="14" height="14" viewBox="0 0 14 14"><g fill="#f4f4f4" stroke="#333" stroke-width="1"><path d="M1 9 L7 12.5 L13 9 L7 5.5Z"/><path d="M1 6.5 L7 10 L13 6.5 L7 3Z"/><path d="M1 4 L7 7.5 L13 4 L7 0.5Z"/></g></svg>
<svg class="a" style="left:235px;top:28px" width="16" height="14" viewBox="0 0 16 14"><rect x="0.5" y="0.5" width="15" height="13" fill="#f4f4f4" stroke="#c8c8c8"/><rect x="3" y="3" width="6" height="5" fill="none" stroke="#aac" stroke-dasharray="1 1"/><rect x="10" y="9" width="5" height="4" fill="#e8e8e8" stroke="#ccc"/></svg>
<div class="pop" style="left:266px;top:27px;width:121px;height:15px"></div><div class="t" style="left:276px;top:29px;font-size:9.8px;color:#111">Prop GF Plan</div><svg class="a" style="left:374px;top:32px" width="8" height="5" viewBox="0 0 8 5"><path d="M0.7 0.7 L4 4 L7.3 0.7" fill="none" stroke="#222" stroke-width="1.3"/></svg>
<div class="a" style="left:395px;top:26px;width:1px;height:17px;background:#cdcdcd"></div>
<svg class="a" style="left:398px;top:26px" width="24" height="18" viewBox="0 0 24 18"><ellipse cx="7" cy="8" rx="6" ry="5" fill="#b58d6a" opacity=".7"/><path d="M1 8 L9 5 M1 8 L9 11 M1 8 H16" stroke="#111" stroke-width="1.2" fill="none"/><path d="M12 3 L22 1 L21 17 L12 15Z" fill="#fbe6f6" stroke="#e040c8" stroke-width="1"/><path d="M12 9 L21.5 8.5 M16.5 2 V16" stroke="#e040c8" stroke-width="1"/></svg>
<div class="a" style="left:423px;top:26px;width:1px;height:17px;background:#cdcdcd"></div>
<div class="pop" style="left:426px;top:27px;width:120px;height:15px"></div><div class="t" style="left:435px;top:29px;font-size:9.8px;color:#111">Working Plane</div><svg class="a" style="left:533px;top:32px" width="8" height="5" viewBox="0 0 8 5"><path d="M0.7 0.7 L4 4 L7.3 0.7" fill="none" stroke="#222" stroke-width="1.3"/></svg>
<div class="a" style="left:549px;top:26px;width:1px;height:17px;background:#cdcdcd"></div>
<div class="pop" style="left:553px;top:27px;width:43px;height:15px"></div><svg class="a" style="left:583px;top:32px" width="8" height="5" viewBox="0 0 8 5"><path d="M0.7 0.7 L4 4 L7.3 0.7" fill="none" stroke="#222" stroke-width="1.3"/></svg>
<svg class="a" style="left:566px;top:28px" width="12" height="13" viewBox="0 0 12 13"><path d="M0.5 0.5 H8 L11.5 4 V12.5 H0.5Z" fill="#fff" stroke="#555"/><path d="M1 12 V8 L4 6 L7 9 L11 6 V12Z" fill="#a99ce6"/></svg>
<div class="a" style="left:601px;top:26px;width:1px;height:17px;background:#cdcdcd"></div>
<svg class="a" style="left:609px;top:27px" width="16" height="16" viewBox="0 0 16 16"><path d="M4 1 H11 L14 4 V15 H4Z" fill="#fff" stroke="#333"/><circle cx="6" cy="7" r="4" fill="#eee" stroke="#222" stroke-width="1.3"/><path d="M9 10 L13 14" stroke="#b8860b" stroke-width="2.2"/></svg>
<svg class="a" style="left:632px;top:27px" width="18" height="16" viewBox="0 0 18 16"><rect x="3" y="2" width="14" height="10" fill="#c9c1ef" stroke="#3344cc" stroke-dasharray="1.5 1.5"/><circle cx="7" cy="7" r="4" fill="#eee" stroke="#222" stroke-width="1.3"/><path d="M10 10 L14 14" stroke="#b8860b" stroke-width="2.2"/></svg>
<div class="a" style="left:655px;top:26px;width:1px;height:17px;background:#cdcdcd"></div>
<svg class="a" style="left:664px;top:28px" width="13" height="13" viewBox="0 0 13 13"><circle cx="5" cy="5" r="3.8" fill="#eee" stroke="#222" stroke-width="1.3"/><path d="M8 8 L12 12" stroke="#b8860b" stroke-width="2.2"/></svg>
<div class="pop" style="left:683px;top:27px;width:57px;height:15px"></div>
<div class="a" style="left:723px;top:28px;width:1px;height:13px;background:#cdcdcd"></div>
<div class="t" style="left:688px;top:29px;font-size:9.8px;color:#111">16%</div>
<svg class="a" style="left:727px;top:32px" width="8" height="5" viewBox="0 0 8 5"><path d="M0.7 0.7 L4 4 L7.3 0.7" fill="none" stroke="#222" stroke-width="1.3"/></svg>
<div class="a" style="left:746px;top:26px;width:1px;height:17px;background:#cdcdcd"></div>
<svg class="a" style="left:752px;top:26px" width="14" height="16" viewBox="0 0 14 16"><path d="M1 1 L13 0.5 L12 15 L2 13Z" fill="#fde8f7" stroke="#e040c8" stroke-width="1.1"/><path d="M1.5 7 L12.5 7.5 M7 1 V14" stroke="#e040c8" stroke-width="1"/><circle cx="7" cy="7.2" r="1.2" fill="#c00"/></svg>
<div class="a" style="left:773px;top:25px;width:24px;height:20px;background:#cfcfcf;border:1px solid #bdbdbd"></div>
<svg class="a" style="left:775px;top:27px" width="20" height="14" viewBox="0 0 20 14"><path d="M10 1 L19 7 L10 13 L1 7Z" fill="#dff4ff" stroke="#43b4f0" stroke-width="1.6"/><path d="M5.5 4 L14.5 10 M14.5 4 L5.5 10" stroke="#43b4f0" stroke-width="1.2"/><circle cx="10" cy="7" r="1.4" fill="#d00"/></svg>
<div class="a" style="left:800px;top:26px;width:1px;height:17px;background:#cdcdcd"></div>
<div class="pop" style="left:803px;top:27px;width:122px;height:15px"></div><div class="t" style="left:813px;top:29px;font-size:9.8px;color:#111">Rotated Top</div><svg class="a" style="left:912px;top:32px" width="8" height="5" viewBox="0 0 8 5"><path d="M0.7 0.7 L4 4 L7.3 0.7" fill="none" stroke="#222" stroke-width="1.3"/></svg>
<div class="a" style="left:929px;top:26px;width:1px;height:17px;background:#cdcdcd"></div>
<svg class="a" style="left:935px;top:28px" width="17" height="16" viewBox="0 0 17 16"><path d="M7 12 L2 2" stroke="#1a9b1a" stroke-width="1.3"/><path d="M7 12 L15 7" stroke="#d22" stroke-width="1.3"/><circle cx="7" cy="12" r="1.8" fill="#4a66d6"/><text x="5" y="5" font-size="5" fill="#333" font-family="Liberation Sans">Y</text><text x="12" y="15" font-size="5" fill="#333" font-family="Liberation Sans">X</text></svg>
<div class="a" style="left:956px;top:27px;width:64px;height:15px;background:#fff;border:1px solid #b5b5b5"></div>
<div class="t" style="left:960px;top:29px;font-size:10.5px;color:#3a1aff">131°</div>
<div class="a" style="left:1024px;top:26px;width:1px;height:17px;background:#cdcdcd"></div>
<svg class="a" style="left:1032px;top:27px" width="16" height="15" viewBox="0 0 16 15"><rect x="0" y="1" width="2" height="13" fill="#222"/><g fill="#f4f4f4" stroke="#333" stroke-width="1"><path d="M3 10 L9 13.5 L15 10 L9 6.5Z"/><path d="M3 7 L9 10.5 L15 7 L9 3.5Z"/><path d="M3 4 L9 7.5 L15 4 L9 0.5Z"/></g></svg>
<div class="a" style="left:1052px;top:26px;width:1px;height:17px;background:#cdcdcd"></div>
<div class="pop" style="left:1056px;top:27px;width:121px;height:15px"></div><div class="t" style="left:1066px;top:29px;font-size:9.8px;color:#111">Orthogonal</div><svg class="a" style="left:1164px;top:32px" width="8" height="5" viewBox="0 0 8 5"><path d="M0.7 0.7 L4 4 L7.3 0.7" fill="none" stroke="#222" stroke-width="1.3"/></svg>
<div class="a" style="left:1181px;top:26px;width:1px;height:17px;background:#cdcdcd"></div>
<div class="pop" style="left:1185px;top:27px;width:43px;height:15px"></div><svg class="a" style="left:1215px;top:32px" width="8" height="5" viewBox="0 0 8 5"><path d="M0.7 0.7 L4 4 L7.3 0.7" fill="none" stroke="#222" stroke-width="1.3"/></svg>
<svg class="a" style="left:1193px;top:27px" width="17" height="15" viewBox="0 0 17 15"><g transform="scale(1)"><path d="M4 7 Q2 5 1 3 Q0.5 2 1.5 2.5 Q3 4 4.5 6Z" fill="#b3acef" stroke="#8a83c8" stroke-width=".6"/><path d="M14 6 Q17 5 17 8 Q17 11 13.5 12" fill="none" stroke="#a9a2e8" stroke-width="1.6"/><ellipse cx="9" cy="9.5" rx="6" ry="5" fill="#aea7ee" stroke="#8a83c8" stroke-width=".7"/><ellipse cx="8" cy="8" rx="3" ry="2" fill="#d4d0f8" opacity=".8"/><ellipse cx="9" cy="4.8" rx="3.5" ry="1.3" fill="#c2bcf4" stroke="#8a83c8" stroke-width=".5"/><circle cx="9" cy="3.3" r="1" fill="#b3acef"/></g></svg>
<div class="a" style="left:1231px;top:28px;width:16px;height:13px;background:#f4f4f4;border:1px solid #999"></div>
<svg class="a" style="left:1236px;top:30px" width="6" height="9" viewBox="0 0 6 9"><path d="M0 0 L6 4.5 L0 9Z" fill="#111"/></svg>
<svg class="a" style="left:9px;top:57px" width="22" height="17" viewBox="0 0 22 17"><path d="M1 16 L13 4" stroke="#222" stroke-width="1.3"/><path d="M13 1 H17 V5 M1 16 V12 M1 16 H5" fill="none" stroke="#222" stroke-width="1.3"/><path d="M12 1 L17 1 L17 6" fill="none" stroke="#222"/><rect x="5.5" y="7.5" width="4" height="4" fill="#222"/><circle cx="16" cy="13" r="3.8" fill="#fff" stroke="#d0202a" stroke-width="1.5"/><path d="M13.5 10.5 L18.5 15.5" stroke="#d0202a" stroke-width="1.5"/></svg>
<div class="a" style="left:33px;top:54px;width:29px;height:24px;background:#cdcdcd;border:1px solid #bcbcbc"></div>
<svg class="a" style="left:39px;top:57px" width="17" height="17" viewBox="0 0 17 17"><path d="M2 15 L15 2" stroke="#222" stroke-width="1.3"/><path d="M10 2 H15 V7 M2 10 V15 H7" fill="none" stroke="#222" stroke-width="1.4"/><rect x="6.5" y="6.5" width="4" height="4" fill="#222"/></svg>
<svg class="a" style="left:65px;top:57px" width="23" height="17" viewBox="0 0 23 17"><path d="M2 15 L13 4 M8 15 L21 2" stroke="#222" stroke-width="1.3"/><path d="M9 2 H14 V7 M16 2 H21 V7 M2 10 V15 H7" fill="none" stroke="#222" stroke-width="1.4"/><rect x="5" y="8" width="4" height="4" fill="#222"/><rect x="12" y="8" width="4" height="4" fill="#222"/></svg>
<div class="a" style="left:100px;top:55px;width:1px;height:22px;background:#cdcdcd"></div>
<svg class="a" style="left:108px;top:56px" width="26" height="19" viewBox="0 0 26 19"><rect x="7" y="1" width="4" height="3" fill="#fff" stroke="#4aa0e0"/><rect x="12" y="1" width="4" height="3" fill="#fff" stroke="#4aa0e0"/><rect x="1" y="9" width="4" height="7" fill="#d9a64a" stroke="#333"/><rect x="14" y="9" width="4" height="7" fill="#d9a64a" stroke="#333"/><path d="M5 10 H14 M5 15 H14" stroke="#4aa0e0" stroke-dasharray="1.5 1"/><path d="M22 2 V16 M20 4 L22 1.5 L24 4 M20 14 L22 16.5 L24 14" fill="none" stroke="#333" stroke-width="1.1"/></svg>
<div class="a" style="left:142px;top:55px;width:1px;height:22px;background:#cdcdcd"></div>
<div class="a" style="left:148px;top:54px;width:30px;height:24px;background:#cdcdcd;border:1px solid #bcbcbc"></div>
<svg class="a" style="left:154px;top:60px" width="18" height="13" viewBox="0 0 18 13"><rect x="1" y="1" width="16" height="11" fill="#d9d9d9" stroke="#333" stroke-width="1.3"/></svg>
<svg class="a" style="left:184px;top:58px" width="19" height="16" viewBox="0 0 19 16"><ellipse cx="11" cy="6.5" rx="7.5" ry="5" fill="none" stroke="#333" stroke-width="1.1"/><path d="M5 10 Q1 12 3 14 Q5 15 6 12" fill="none" stroke="#333" stroke-width="1.1"/></svg>
<svg class="a" style="left:211px;top:57px" width="21" height="17" viewBox="0 0 21 17"><path d="M3 14 L2 3 L9 6 L20 4 L14 15 Z" fill="none" stroke="#333" stroke-width="1.1"/><circle cx="3" cy="14" r="1.8" fill="none" stroke="#333"/></svg>
<div class="a" style="left:244px;top:55px;width:1px;height:22px;background:#cdcdcd"></div>
<svg class="a" style="left:253px;top:56px" width="24" height="19" viewBox="0 0 24 19"><path d="M1 18 V2 H17 V18 M4 18 V8 H14 V18" fill="#ddb06e" stroke="#333" stroke-width="1"/><path d="M1 2 H17 V8 H14 V18 M4 18 V8 H1" fill="none" stroke="#333"/><path d="M21 2 V17 M19 4 L21 1.5 L23 4 M19 15 L21 17.5 L23 15" fill="none" stroke="#333" stroke-width="1.1"/></svg>
<div class="a" style="left:286px;top:55px;width:1px;height:22px;background:#cdcdcd"></div>
<div class="t" style="left:294px;top:60px;font-size:9.9px;color:#111">Selection Tool: Rectangular Marquee Mode</div>
<svg class="a" style="left:1061px;top:57px" width="18" height="18" viewBox="0 0 18 18"><g transform="translate(9 9)"><circle r="6" fill="#b9b9b9" stroke="#777" stroke-dasharray="2 1.2" stroke-width="3"/><circle r="5" fill="#c5c5c5"/><circle r="2.2" fill="#efefef" stroke="#888"/></g></svg>
<svg class="a" style="left:1082px;top:63px" width="8" height="5" viewBox="0 0 8 5"><path d="M0.7 0.7 L4 4 L7.3 0.7" fill="none" stroke="#222" stroke-width="1.3"/></svg>
<svg class="a" style="left:1104px;top:58px" width="22" height="20" viewBox="0 0 22 20"><g transform="scale(1.15)"><path d="M4 7 Q2 5 1 3 Q0.5 2 1.5 2.5 Q3 4 4.5 6Z" fill="#b3acef" stroke="#8a83c8" stroke-width=".6"/><path d="M14 6 Q17 5 17 8 Q17 11 13.5 12" fill="none" stroke="#a9a2e8" stroke-width="1.6"/><ellipse cx="9" cy="9.5" rx="6" ry="5" fill="#aea7ee" stroke="#8a83c8" stroke-width=".7"/><ellipse cx="8" cy="8" rx="3" ry="2" fill="#d4d0f8" opacity=".8"/><ellipse cx="9" cy="4.8" rx="3.5" ry="1.3" fill="#c2bcf4" stroke="#8a83c8" stroke-width=".5"/><circle cx="9" cy="3.3" r="1" fill="#b3acef"/></g><path d="M7 13 L10 17 L17 6" fill="none" stroke="#19b319" stroke-width="2.6"/></svg>
<svg class="a" style="left:1129px;top:63px" width="8" height="5" viewBox="0 0 8 5"><path d="M0.7 0.7 L4 4 L7.3 0.7" fill="none" stroke="#222" stroke-width="1.3"/></svg>
<svg class="a" style="left:1149px;top:58px" width="22" height="20" viewBox="0 0 22 20"><path d="M10 1 L18 9 L10 18 L2 9Z" fill="#a9a2e8" stroke="#6a63c9"/><path d="M6 5 L14 14 M14 5 L6 14 M2 9 H18 M10 1 V18" stroke="#6a63c9" stroke-width=".8"/><path d="M8 13 L11 17 L19 6" fill="none" stroke="#19b319" stroke-width="2.6"/></svg>
<svg class="a" style="left:1173px;top:63px" width="8" height="5" viewBox="0 0 8 5"><path d="M0.7 0.7 L4 4 L7.3 0.7" fill="none" stroke="#222" stroke-width="1.3"/></svg>
<svg class="a" style="left:1194px;top:59px" width="25" height="18" viewBox="0 0 25 18"><path d="M1 1 H16 L17 2 V17 H1Z" fill="#555"/><rect x="3" y="2" width="12" height="8" fill="#f4f4f4"/><rect x="3" y="8" width="12" height="1.5" fill="#6ab6e6"/><rect x="5" y="12" width="3" height="5" fill="#eee"/><circle cx="18" cy="12" r="5.5" fill="#f4f4f4" stroke="#666"/><path d="M18 9 V12 H21" fill="none" stroke="#444"/></svg>
<div class="a" style="left:1231px;top:61px;width:16px;height:12px;background:#f4f4f4;border:1px solid #999"></div>
<svg class="a" style="left:1236px;top:63px" width="6" height="8" viewBox="0 0 6 8"><path d="M0 0 L6 4 L0 8Z" fill="#111"/></svg>
<div class="a" style="left:0;top:84px;width:1253px;height:16px;background:#fff"></div>
<svg class="a" style="left:0;top:84px" width="1253" height="16"><rect x="0" y="0" width="1253" height="16" fill="#fff"/><rect x="0" y="15" width="1253" height="1" fill="#2b10f0"/><rect x="20.9" y="11" width="1" height="4" fill="#2b10f0"/><rect x="26.8" y="13" width="1" height="2" fill="#2b10f0"/><rect x="32.7" y="13" width="1" height="2" fill="#2b10f0"/><rect x="38.6" y="13" width="1" height="2" fill="#2b10f0"/><rect x="44.5" y="13" width="1" height="2" fill="#2b10f0"/><rect x="50.4" y="0" width="1" height="15" fill="#2b10f0"/><rect x="56.4" y="13" width="1" height="2" fill="#2b10f0"/><rect x="62.3" y="13" width="1" height="2" fill="#2b10f0"/><rect x="68.2" y="13" width="1" height="2" fill="#2b10f0"/><rect x="74.1" y="13" width="1" height="2" fill="#2b10f0"/><rect x="80.0" y="11" width="1" height="4" fill="#2b10f0"/><rect x="85.9" y="13" width="1" height="2" fill="#2b10f0"/><rect x="91.9" y="13" width="1" height="2" fill="#2b10f0"/><rect x="97.8" y="13" width="1" height="2" fill="#2b10f0"/><rect x="103.7" y="13" width="1" height="2" fill="#2b10f0"/><text x="53.9" y="11" font-size="9" fill="#2b10f0" font-family="Liberation Sans">70000</text><rect x="109.6" y="0" width="1" height="15" fill="#2b10f0"/><rect x="115.5" y="13" width="1" height="2" fill="#2b10f0"/><rect x="121.4" y="13" width="1" height="2" fill="#2b10f0"/><rect x="127.3" y="13" width="1" height="2" fill="#2b10f0"/><rect x="133.3" y="13" width="1" height="2" fill="#2b10f0"/><rect x="139.2" y="11" width="1" height="4" fill="#2b10f0"/><rect x="145.1" y="13" width="1" height="2" fill="#2b10f0"/><rect x="151.0" y="13" width="1" height="2" fill="#2b10f0"/><rect x="156.9" y="13" width="1" height="2" fill="#2b10f0"/><rect x="162.8" y="13" width="1" height="2" fill="#2b10f0"/><text x="113.1" y="11" font-size="9" fill="#2b10f0" font-family="Liberation Sans">60000</text><rect x="168.8" y="0" width="1" height="15" fill="#2b10f0"/><rect x="174.7" y="13" width="1" height="2" fill="#2b10f0"/><rect x="180.6" y="13" width="1" height="2" fill="#2b10f0"/><rect x="186.5" y="13" width="1" height="2" fill="#2b10f0"/><rect x="192.4" y="13" width="1" height="2" fill="#2b10f0"/><rect x="198.3" y="11" width="1" height="4" fill="#2b10f0"/><rect x="204.2" y="13" width="1" height="2" fill="#2b10f0"/><rect x="210.2" y="13" width="1" height="2" fill="#2b10f0"/><rect x="216.1" y="13" width="1" height="2" fill="#2b10f0"/><rect x="222.0" y="13" width="1" height="2" fill="#2b10f0"/><text x="172.2" y="11" font-size="9" fill="#2b10f0" font-family="Liberation Sans">50000</text><rect x="227.9" y="0" width="1" height="15" fill="#2b10f0"/><rect x="233.8" y="13" width="1" height="2" fill="#2b10f0"/><rect x="239.7" y="13" width="1" height="2" fill="#2b10f0"/><rect x="245.6" y="13" width="1" height="2" fill="#2b10f0"/><rect x="251.6" y="13" width="1" height="2" fill="#2b10f0"/><rect x="257.5" y="11" width="1" height="4" fill="#2b10f0"/><rect x="263.4" y="13" width="1" height="2" fill="#2b10f0"/><rect x="269.3" y="13" width="1" height="2" fill="#2b10f0"/><rect x="275.2" y="13" width="1" height="2" fill="#2b10f0"/><rect x="281.1" y="13" width="1" height="2" fill="#2b10f0"/><text x="231.4" y="11" font-size="9" fill="#2b10f0" font-family="Liberation Sans">40000</text><rect x="287.1" y="0" width="1" height="15" fill="#2b10f0"/><rect x="293.0" y="13" width="1" height="2" fill="#2b10f0"/><rect x="298.9" y="13" width="1" height="2" fill="#2b10f0"/><rect x="304.8" y="13" width="1" height="2" fill="#2b10f0"/><rect x="310.7" y="13" width="1" height="2" fill="#2b10f0"/><rect x="316.6" y="11" width="1" height="4" fill="#2b10f0"/><rect x="322.5" y="13" width="1" height="2" fill="#2b10f0"/><rect x="328.5" y="13" width="1" height="2" fill="#2b10f0"/><rect x="334.4" y="13" width="1" height="2" fill="#2b10f0"/><rect x="340.3" y="13" width="1" height="2" fill="#2b10f0"/><text x="290.6" y="11" font-size="9" fill="#2b10f0" font-family="Liberation Sans">30000</text><rect x="346.2" y="0" width="1" height="15" fill="#2b10f0"/><rect x="352.1" y="13" width="1" height="2" fill="#2b10f0"/><rect x="358.0" y="13" width="1" height="2" fill="#2b10f0"/><rect x="363.9" y="13" width="1" height="2" fill="#2b10f0"/><rect x="369.9" y="13" width="1" height="2" fill="#2b10f0"/><rect x="375.8" y="11" width="1" height="4" fill="#2b10f0"/><rect x="381.7" y="13" width="1" height="2" fill="#2b10f0"/><rect x="387.6" y="13" width="1" height="2" fill="#2b10f0"/><rect x="393.5" y="13" width="1" height="2" fill="#2b10f0"/><rect x="399.4" y="13" width="1" height="2" fill="#2b10f0"/><text x="349.7" y="11" font-size="9" fill="#2b10f0" font-family="Liberation Sans">20000</text><rect x="405.4" y="0" width="1" height="15" fill="#2b10f0"/><rect x="411.3" y="13" width="1" height="2" fill="#2b10f0"/><rect x="417.2" y="13" width="1" height="2" fill="#2b10f0"/><rect x="423.1" y="13" width="1" height="2" fill="#2b10f0"/><rect x="429.0" y="13" width="1" height="2" fill="#2b10f0"/><rect x="434.9" y="11" width="1" height="4" fill="#2b10f0"/><rect x="440.8" y="13" width="1" height="2" fill="#2b10f0"/><rect x="446.8" y="13" width="1" height="2" fill="#2b10f0"/><rect x="452.7" y="13" width="1" height="2" fill="#2b10f0"/><rect x="458.6" y="13" width="1" height="2" fill="#2b10f0"/><text x="408.9" y="11" font-size="9" fill="#2b10f0" font-family="Liberation Sans">10000</text><rect x="464.5" y="0" width="1" height="15" fill="#2b10f0"/><rect x="470.4" y="13" width="1" height="2" fill="#2b10f0"/><rect x="476.3" y="13" width="1" height="2" fill="#2b10f0"/><rect x="482.2" y="13" width="1" height="2" fill="#2b10f0"/><rect x="488.2" y="13" width="1" height="2" fill="#2b10f0"/><rect x="494.1" y="11" width="1" height="4" fill="#2b10f0"/><rect x="500.0" y="13" width="1" height="2" fill="#2b10f0"/><rect x="505.9" y="13" width="1" height="2" fill="#2b10f0"/><rect x="511.8" y="13" width="1" height="2" fill="#2b10f0"/><rect x="517.7" y="13" width="1" height="2" fill="#2b10f0"/><text x="468.0" y="11" font-size="9" fill="#2b10f0" font-family="Liberation Sans">0</text><rect x="523.6" y="0" width="1" height="15" fill="#2b10f0"/><rect x="529.6" y="13" width="1" height="2" fill="#2b10f0"/><rect x="535.5" y="13" width="1" height="2" fill="#2b10f0"/><rect x="541.4" y="13" width="1" height="2" fill="#2b10f0"/><rect x="547.3" y="13" width="1" height="2" fill="#2b10f0"/><rect x="553.2" y="11" width="1" height="4" fill="#2b10f0"/><rect x="559.1" y="13" width="1" height="2" fill="#2b10f0"/><rect x="565.1" y="13" width="1" height="2" fill="#2b10f0"/><rect x="571.0" y="13" width="1" height="2" fill="#2b10f0"/><rect x="576.9" y="13" width="1" height="2" fill="#2b10f0"/><text x="527.1" y="11" font-size="9" fill="#2b10f0" font-family="Liberation Sans">10000</text><rect x="582.8" y="0" width="1" height="15" fill="#2b10f0"/><rect x="588.7" y="13" width="1" height="2" fill="#2b10f0"/><rect x="594.6" y="13" width="1" height="2" fill="#2b10f0"/><rect x="600.5" y="13" width="1" height="2" fill="#2b10f0"/><rect x="606.5" y="13" width="1" height="2" fill="#2b10f0"/><rect x="612.4" y="11" width="1" height="4" fill="#2b10f0"/><rect x="618.3" y="13" width="1" height="2" fill="#2b10f0"/><rect x="624.2" y="13" width="1" height="2" fill="#2b10f0"/><rect x="630.1" y="13" width="1" height="2" fill="#2b10f0"/><rect x="636.0" y="13" width="1" height="2" fill="#2b10f0"/><text x="586.3" y="11" font-size="9" fill="#2b10f0" font-family="Liberation Sans">20000</text><rect x="642.0" y="0" width="1" height="15" fill="#2b10f0"/><rect x="647.9" y="13" width="1" height="2" fill="#2b10f0"/><rect x="653.8" y="13" width="1" height="2" fill="#2b10f0"/><rect x="659.7" y="13" width="1" height="2" fill="#2b10f0"/><rect x="665.6" y="13" width="1" height="2" fill="#2b10f0"/><rect x="671.5" y="11" width="1" height="4" fill="#2b10f0"/><rect x="677.4" y="13" width="1" height="2" fill="#2b10f0"/><rect x="683.4" y="13" width="1" height="2" fill="#2b10f0"/><rect x="689.3" y="13" width="1" height="2" fill="#2b10f0"/><rect x="695.2" y="13" width="1" height="2" fill="#2b10f0"/><text x="645.5" y="11" font-size="9" fill="#2b10f0" font-family="Liberation Sans">30000</text><rect x="701.1" y="0" width="1" height="15" fill="#2b10f0"/><rect x="707.0" y="13" width="1" height="2" fill="#2b10f0"/><rect x="712.9" y="13" width="1" height="2" fill="#2b10f0"/><rect x="718.8" y="13" width="1" height="2" fill="#2b10f0"/><rect x="724.8" y="13" width="1" height="2" fill="#2b10f0"/><rect x="730.7" y="11" width="1" height="4" fill="#2b10f0"/><rect x="736.6" y="13" width="1" height="2" fill="#2b10f0"/><rect x="742.5" y="13" width="1" height="2" fill="#2b10f0"/><rect x="748.4" y="13" width="1" height="2" fill="#2b10f0"/><rect x="754.3" y="13" width="1" height="2" fill="#2b10f0"/><text x="704.6" y="11" font-size="9" fill="#2b10f0" font-family="Liberation Sans">40000</text><rect x="760.2" y="0" width="1" height="15" fill="#2b10f0"/><rect x="766.2" y="13" width="1" height="2" fill="#2b10f0"/><rect x="772.1" y="13" width="1" height="2" fill="#2b10f0"/><rect x="778.0" y="13" width="1" height="2" fill="#2b10f0"/><rect x="783.9" y="13" width="1" height="2" fill="#2b10f0"/><rect x="789.8" y="11" width="1" height="4" fill="#2b10f0"/><rect x="795.7" y="13" width="1" height="2" fill="#2b10f0"/><rect x="801.7" y="13" width="1" height="2" fill="#2b10f0"/><rect x="807.6" y="13" width="1" height="2" fill="#2b10f0"/><rect x="813.5" y="13" width="1" height="2" fill="#2b10f0"/><text x="763.8" y="11" font-size="9" fill="#2b10f0" font-family="Liberation Sans">50000</text><rect x="819.4" y="0" width="1" height="15" fill="#2b10f0"/><rect x="825.3" y="13" width="1" height="2" fill="#2b10f0"/><rect x="831.2" y="13" width="1" height="2" fill="#2b10f0"/><rect x="837.1" y="13" width="1" height="2" fill="#2b10f0"/><rect x="843.1" y="13" width="1" height="2" fill="#2b10f0"/><rect x="849.0" y="11" width="1" height="4" fill="#2b10f0"/><rect x="854.9" y="13" width="1" height="2" fill="#2b10f0"/><rect x="860.8" y="13" width="1" height="2" fill="#2b10f0"/><rect x="866.7" y="13" width="1" height="2" fill="#2b10f0"/><rect x="872.6" y="13" width="1" height="2" fill="#2b10f0"/><text x="822.9" y="11" font-size="9" fill="#2b10f0" font-family="Liberation Sans">60000</text><rect x="878.5" y="0" width="1" height="15" fill="#2b10f0"/><rect x="884.5" y="13" width="1" height="2" fill="#2b10f0"/><rect x="890.4" y="13" width="1" height="2" fill="#2b10f0"/><rect x="896.3" y="13" width="1" height="2" fill="#2b10f0"/><rect x="902.2" y="13" width="1" height="2" fill="#2b10f0"/><rect x="908.1" y="11" width="1" height="4" fill="#2b10f0"/><rect x="914.0" y="13" width="1" height="2" fill="#2b10f0"/><rect x="920.0" y="13" width="1" height="2" fill="#2b10f0"/><rect x="925.9" y="13" width="1" height="2" fill="#2b10f0"/><rect x="931.8" y="13" width="1" height="2" fill="#2b10f0"/><text x="882.0" y="11" font-size="9" fill="#2b10f0" font-family="Liberation Sans">70000</text><rect x="937.7" y="0" width="1" height="15" fill="#2b10f0"/><rect x="943.6" y="13" width="1" height="2" fill="#2b10f0"/><rect x="949.5" y="13" width="1" height="2" fill="#2b10f0"/><rect x="955.4" y="13" width="1" height="2" fill="#2b10f0"/><rect x="961.4" y="13" width="1" height="2" fill="#2b10f0"/><rect x="967.3" y="11" width="1" height="4" fill="#2b10f0"/><rect x="973.2" y="13" width="1" height="2" fill="#2b10f0"/><rect x="979.1" y="13" width="1" height="2" fill="#2b10f0"/><rect x="985.0" y="13" width="1" height="2" fill="#2b10f0"/><rect x="990.9" y="13" width="1" height="2" fill="#2b10f0"/><text x="941.2" y="11" font-size="9" fill="#2b10f0" font-family="Liberation Sans">80000</text><rect x="996.8" y="0" width="1" height="15" fill="#2b10f0"/><rect x="1002.8" y="13" width="1" height="2" fill="#2b10f0"/><rect x="1008.7" y="13" width="1" height="2" fill="#2b10f0"/><rect x="1014.6" y="13" width="1" height="2" fill="#2b10f0"/><rect x="1020.5" y="13" width="1" height="2" fill="#2b10f0"/><rect x="1026.4" y="11" width="1" height="4" fill="#2b10f0"/><rect x="1032.3" y="13" width="1" height="2" fill="#2b10f0"/><rect x="1038.3" y="13" width="1" height="2" fill="#2b10f0"/><rect x="1044.2" y="13" width="1" height="2" fill="#2b10f0"/><rect x="1050.1" y="13" width="1" height="2" fill="#2b10f0"/><text x="1000.3" y="11" font-size="9" fill="#2b10f0" font-family="Liberation Sans">90000</text><rect x="1056.0" y="0" width="1" height="15" fill="#2b10f0"/><rect x="1061.9" y="13" width="1" height="2" fill="#2b10f0"/><rect x="1067.8" y="13" width="1" height="2" fill="#2b10f0"/><rect x="1073.7" y="13" width="1" height="2" fill="#2b10f0"/><rect x="1079.7" y="13" width="1" height="2" fill="#2b10f0"/><rect x="1085.6" y="11" width="1" height="4" fill="#2b10f0"/><rect x="1091.5" y="13" width="1" height="2" fill="#2b10f0"/><rect x="1097.4" y="13" width="1" height="2" fill="#2b10f0"/><rect x="1103.3" y="13" width="1" height="2" fill="#2b10f0"/><rect x="1109.2" y="13" width="1" height="2" fill="#2b10f0"/><text x="1059.5" y="11" font-size="9" fill="#2b10f0" font-family="Liberation Sans">100000</text><rect x="1115.2" y="0" width="1" height="15" fill="#2b10f0"/><rect x="1121.1" y="13" width="1" height="2" fill="#2b10f0"/><rect x="1127.0" y="13" width="1" height="2" fill="#2b10f0"/><rect x="1132.9" y="13" width="1" height="2" fill="#2b10f0"/><rect x="1138.8" y="13" width="1" height="2" fill="#2b10f0"/><rect x="1144.7" y="11" width="1" height="4" fill="#2b10f0"/><rect x="1150.6" y="13" width="1" height="2" fill="#2b10f0"/><rect x="1156.6" y="13" width="1" height="2" fill="#2b10f0"/><rect x="1162.5" y="13" width="1" height="2" fill="#2b10f0"/><rect x="1168.4" y="13" width="1" height="2" fill="#2b10f0"/><text x="1118.7" y="11" font-size="9" fill="#2b10f0" font-family="Liberation Sans">110000</text><rect x="1174.3" y="0" width="1" height="15" fill="#2b10f0"/><rect x="1180.2" y="13" width="1" height="2" fill="#2b10f0"/><rect x="1186.1" y="13" width="1" height="2" fill="#2b10f0"/><rect x="1192.0" y="13" width="1" height="2" fill="#2b10f0"/><rect x="1198.0" y="13" width="1" height="2" fill="#2b10f0"/><rect x="1203.9" y="11" width="1" height="4" fill="#2b10f0"/><rect x="1209.8" y="13" width="1" height="2" fill="#2b10f0"/><rect x="1215.7" y="13" width="1" height="2" fill="#2b10f0"/><rect x="1221.6" y="13" width="1" height="2" fill="#2b10f0"/><rect x="1227.5" y="13" width="1" height="2" fill="#2b10f0"/><text x="1177.8" y="11" font-size="9" fill="#2b10f0" font-family="Liberation Sans">120000</text><rect x="1233.4" y="0" width="1" height="15" fill="#2b10f0"/><rect x="1239.4" y="13" width="1" height="2" fill="#2b10f0"/><rect x="1245.3" y="13" width="1" height="2" fill="#2b10f0"/><rect x="1251.2" y="13" width="1" height="2" fill="#2b10f0"/><text x="1236.9" y="11" font-size="9" fill="#2b10f0" font-family="Liberation Sans">130000</text></svg>
<div class="a" style="left:332px;top:84px;width:1px;height:15px;background:#666"></div>
<div class="a" style="left:2px;top:84px;width:14px;height:15px;background:#e6e88a"></div>
<svg class="a" style="left:2px;top:85px" width="14" height="14" viewBox="0 0 14 14"><circle cx="7" cy="7" r="4" fill="none" stroke="#111" stroke-width="1.4"/><path d="M7 0 V14 M0 7 H14" stroke="#111" stroke-width="1.2"/></svg>
<div class="a" style="left:15px;top:100px;width:1238px;height:1062px;background:#e9f3e9"></div><div class="a" style="left:1252px;top:100px;width:2px;height:1062px;background:repeating-linear-gradient(180deg,rgba(60,60,60,0) 0px,rgba(60,60,60,0) 14px,rgba(60,60,60,.8) 14px,rgba(60,60,60,.8) 16px,rgba(60,60,60,0) 16px,rgba(60,60,60,0) 18px),linear-gradient(90deg,#c9cfc9,#b9bdb9)"></div>
<svg class="a" style="left:0;top:855px" width="16" height="310"><rect x="0" y="0" width="15" height="310" fill="#fff"/><rect x="15" y="0" width="1" height="310" fill="#2b10f0"/><rect x="0" y="2.1" width="15" height="1" fill="#2b10f0"/><rect x="13" y="8.0" width="2" height="1" fill="#2b10f0"/><rect x="13" y="13.9" width="2" height="1" fill="#2b10f0"/><rect x="13" y="19.9" width="2" height="1" fill="#2b10f0"/><rect x="13" y="25.8" width="2" height="1" fill="#2b10f0"/><rect x="11" y="31.7" width="4" height="1" fill="#2b10f0"/><rect x="13" y="37.6" width="2" height="1" fill="#2b10f0"/><rect x="13" y="43.5" width="2" height="1" fill="#2b10f0"/><rect x="13" y="49.5" width="2" height="1" fill="#2b10f0"/><rect x="13" y="55.4" width="2" height="1" fill="#2b10f0"/><rect x="0" y="61.3" width="15" height="1" fill="#2b10f0"/><rect x="13" y="67.2" width="2" height="1" fill="#2b10f0"/><rect x="13" y="73.1" width="2" height="1" fill="#2b10f0"/><rect x="13" y="79.1" width="2" height="1" fill="#2b10f0"/><rect x="13" y="85.0" width="2" height="1" fill="#2b10f0"/><rect x="11" y="90.9" width="4" height="1" fill="#2b10f0"/><rect x="13" y="96.8" width="2" height="1" fill="#2b10f0"/><rect x="13" y="102.7" width="2" height="1" fill="#2b10f0"/><rect x="13" y="108.7" width="2" height="1" fill="#2b10f0"/><rect x="13" y="114.6" width="2" height="1" fill="#2b10f0"/><rect x="0" y="120.5" width="15" height="1" fill="#2b10f0"/><rect x="13" y="126.4" width="2" height="1" fill="#2b10f0"/><rect x="13" y="132.3" width="2" height="1" fill="#2b10f0"/><rect x="13" y="138.3" width="2" height="1" fill="#2b10f0"/><rect x="13" y="144.2" width="2" height="1" fill="#2b10f0"/><rect x="11" y="150.1" width="4" height="1" fill="#2b10f0"/><rect x="13" y="156.0" width="2" height="1" fill="#2b10f0"/><rect x="13" y="161.9" width="2" height="1" fill="#2b10f0"/><rect x="13" y="167.9" width="2" height="1" fill="#2b10f0"/><rect x="13" y="173.8" width="2" height="1" fill="#2b10f0"/><rect x="0" y="179.7" width="15" height="1" fill="#2b10f0"/><rect x="13" y="185.6" width="2" height="1" fill="#2b10f0"/><rect x="13" y="191.5" width="2" height="1" fill="#2b10f0"/><rect x="13" y="197.5" width="2" height="1" fill="#2b10f0"/><rect x="13" y="203.4" width="2" height="1" fill="#2b10f0"/><rect x="11" y="209.3" width="4" height="1" fill="#2b10f0"/><rect x="13" y="215.2" width="2" height="1" fill="#2b10f0"/><rect x="13" y="221.1" width="2" height="1" fill="#2b10f0"/><rect x="13" y="227.1" width="2" height="1" fill="#2b10f0"/><rect x="13" y="233.0" width="2" height="1" fill="#2b10f0"/><rect x="0" y="238.9" width="15" height="1" fill="#2b10f0"/><rect x="13" y="244.8" width="2" height="1" fill="#2b10f0"/><rect x="13" y="250.7" width="2" height="1" fill="#2b10f0"/><rect x="13" y="256.7" width="2" height="1" fill="#2b10f0"/><rect x="13" y="262.6" width="2" height="1" fill="#2b10f0"/><rect x="11" y="268.5" width="4" height="1" fill="#2b10f0"/><rect x="13" y="274.4" width="2" height="1" fill="#2b10f0"/><rect x="13" y="280.3" width="2" height="1" fill="#2b10f0"/><rect x="13" y="286.3" width="2" height="1" fill="#2b10f0"/><rect x="13" y="292.2" width="2" height="1" fill="#2b10f0"/></svg>
<div class="a" style="left:22px;top:1153px;width:7px;height:6px;background:#d6d6d6;border:1px solid #aaa"></div><div class="a" style="left:25px;top:1154px;width:2px;height:3px;background:#222"></div>
<div class="t" style="left:3px;top:913px;font-size:9px;color:#2b10f0;transform-origin:0 0;transform:rotate(-90deg);line-height:9px">80000</div>
<div class="t" style="left:3px;top:973px;font-size:9px;color:#2b10f0;transform-origin:0 0;transform:rotate(-90deg);line-height:9px">90000</div>
<div class="t" style="left:3px;top:1032px;font-size:9px;color:#2b10f0;transform-origin:0 0;transform:rotate(-90deg);line-height:9px">100000</div>
<div class="t" style="left:3px;top:1092px;font-size:9px;color:#2b10f0;transform-origin:0 0;transform:rotate(-90deg);line-height:9px">110000</div>
<div class="t" style="left:3px;top:1152px;font-size:9px;color:#2b10f0;transform-origin:0 0;transform:rotate(-90deg);line-height:9px">120000</div>
<div class="a" style="left:262px;top:236px;width:418px;height:418px;background:#ebd0df"></div>
<div class="a" style="left:271px;top:245px;width:400px;height:400px;background:#ece3e7"></div>
<svg class="a" style="left:318px;top:123px" width="28" height="28" viewBox="0 0 28 28"><path d="M0.5 6 V0.5 H6 M22 0.5 H27.5 V6 M27.5 22 V27.5 H22 M6 27.5 H0.5 V22" fill="none" stroke="#c8cfc8"/><rect x="8.5" y="8.5" width="11" height="11" fill="none" stroke="#c5cbc5"/></svg>
<div class="a" style="left:168px;top:444px;width:302px;height:1px;background:#f05a5a"></div>
<div class="a" style="left:470px;top:443px;width:296px;height:3px;background:#f08a8a"></div>
<div class="a" style="left:469.5px;top:100px;width:1.6px;height:344px;background:#72ea6f"></div><div class="a" style="left:470px;top:444px;width:1px;height:681px;background:#5ee35a"></div>
<div class="a" style="left:469px;top:99px;width:3px;height:8px;background:#8af088"></div>
<div class="a" style="left:347px;top:143px;width:283px;height:20px;border:1px solid #3a1aff;background:#eef4ee"></div>
<div class="t" style="left:353px;top:148px;font-size:11px;color:#3a1aff">X:</div>
<div class="t" style="left:374px;top:148px;font-size:11px;color:#3a1aff">-23400</div>
<div class="t" style="left:423px;top:148px;font-size:11px;color:#3a1aff">Y:</div>
<div class="t" style="left:443px;top:148px;font-size:11px;color:#3a1aff">52200</div>
<div class="t" style="left:493px;top:148px;font-size:11px;color:#3a1aff">L:</div>
<div class="t" style="left:512px;top:148px;font-size:11px;color:#3a1aff">65488.5</div>
<div class="t" style="left:565px;top:148px;font-size:11px;color:#3a1aff">A:</div>
<div class="t" style="left:586px;top:148px;font-size:11px;color:#3a1aff">104°</div>
<svg class="a" style="left:441px;top:447px" width="180" height="155" viewBox="0 0 180 155"><g transform="translate(-486 -470)"><path d="M580.5 478 L578 620" stroke="#a020c0" stroke-width="1"/><path transform="translate(589.0 483.0)" d="M0 -8 L1.3 -3.5 L5.5 0.5 L4.5 1.5 L0.5 0 L-4.5 1.8 L-5.5 0.8 L-1.3 -3.5Z" fill="#2a1e24"/><path transform="translate(588.4 492.8)" d="M0 -8 L1.3 -3.5 L5.5 0.5 L4.5 1.5 L0.5 0 L-4.5 1.8 L-5.5 0.8 L-1.3 -3.5Z" fill="#2a1e24"/><path transform="translate(587.7 502.6)" d="M0 -8 L1.3 -3.5 L5.5 0.5 L4.5 1.5 L0.5 0 L-4.5 1.8 L-5.5 0.8 L-1.3 -3.5Z" fill="#2a1e24"/><path transform="translate(587.1 512.4)" d="M0 -8 L1.3 -3.5 L5.5 0.5 L4.5 1.5 L0.5 0 L-4.5 1.8 L-5.5 0.8 L-1.3 -3.5Z" fill="#2a1e24"/><path transform="translate(586.4 522.2)" d="M0 -8 L1.3 -3.5 L5.5 0.5 L4.5 1.5 L0.5 0 L-4.5 1.8 L-5.5 0.8 L-1.3 -3.5Z" fill="#2a1e24"/><path transform="translate(585.8 532.0)" d="M0 -8 L1.3 -3.5 L5.5 0.5 L4.5 1.5 L0.5 0 L-4.5 1.8 L-5.5 0.8 L-1.3 -3.5Z" fill="#2a1e24"/><path transform="translate(585.2 541.8)" d="M0 -8 L1.3 -3.5 L5.5 0.5 L4.5 1.5 L0.5 0 L-4.5 1.8 L-5.5 0.8 L-1.3 -3.5Z" fill="#2a1e24"/><path transform="translate(584.5 551.6)" d="M0 -8 L1.3 -3.5 L5.5 0.5 L4.5 1.5 L0.5 0 L-4.5 1.8 L-5.5 0.8 L-1.3 -3.5Z" fill="#2a1e24"/><path transform="translate(583.9 561.4)" d="M0 -8 L1.3 -3.5 L5.5 0.5 L4.5 1.5 L0.5 0 L-4.5 1.8 L-5.5 0.8 L-1.3 -3.5Z" fill="#2a1e24"/><path transform="translate(583.2 571.2)" d="M0 -8 L1.3 -3.5 L5.5 0.5 L4.5 1.5 L0.5 0 L-4.5 1.8 L-5.5 0.8 L-1.3 -3.5Z" fill="#2a1e24"/><path transform="translate(582.6 581.0)" d="M0 -8 L1.3 -3.5 L5.5 0.5 L4.5 1.5 L0.5 0 L-4.5 1.8 L-5.5 0.8 L-1.3 -3.5Z" fill="#2a1e24"/><path transform="translate(582.0 590.8)" d="M0 -8 L1.3 -3.5 L5.5 0.5 L4.5 1.5 L0.5 0 L-4.5 1.8 L-5.5 0.8 L-1.3 -3.5Z" fill="#2a1e24"/><path transform="translate(581.3 600.6)" d="M0 -8 L1.3 -3.5 L5.5 0.5 L4.5 1.5 L0.5 0 L-4.5 1.8 L-5.5 0.8 L-1.3 -3.5Z" fill="#2a1e24"/><path transform="translate(580.7 610.4)" d="M0 -8 L1.3 -3.5 L5.5 0.5 L4.5 1.5 L0.5 0 L-4.5 1.8 L-5.5 0.8 L-1.3 -3.5Z" fill="#2a1e24"/><path transform="translate(580.0 620.2)" d="M0 -8 L1.3 -3.5 L5.5 0.5 L4.5 1.5 L0.5 0 L-4.5 1.8 L-5.5 0.8 L-1.3 -3.5Z" fill="#2a1e24"/><path d="M615 506 L621 620" stroke="#a020c0" stroke-width="1.1"/><path d="M651 506 L655 619" stroke="#a020c0" stroke-width="1.1"/><path d="M493.5 565.5 H517 L549 566.5 H557.5 V574 L556 598 L555.5 617.5 H539 V616.5 H489.5 L490.5 600 L492 583 L493.5 570Z" fill="#e6ede6" stroke="#b000c0" stroke-width="1"/><path d="M494.5 574.5 H535.5 V591 H555 V614.5 H494.5Z" fill="#fdeaf6" stroke="#b000c0" stroke-width="2"/><path d="M496 576 H534 V592.5 H553.5 V613 H496Z" fill="none" stroke="#ee1c2c" stroke-width="1.6" stroke-dasharray="2 1"/><rect x="544.5" y="568.5" width="10" height="15" fill="#e6ede6" stroke="#b000c0" stroke-width="1.2"/><rect x="547" y="570" width="4" height="12" fill="#444" opacity=".7"/><rect x="535.5" y="584.5" width="19" height="6" fill="#e6ede6" stroke="#b000c0" stroke-width="1"/><path d="M497.5 577.5 H511.5 V581.5 H499.5 V598" fill="none" stroke="#f0a020" stroke-width="1"/><rect x="498" y="588" width="3" height="3" fill="#ff20e0"/><rect x="500" y="595" width="5" height="4" fill="#ff20e0"/><rect x="497.5" y="599" width="3" height="14" fill="#fff" stroke="#ff20e0" stroke-width="1"/><rect x="498.5" y="601" width="1.5" height="10" fill="#222" opacity=".6"/><rect x="517" y="579.5" width="9" height="6" rx="2" fill="#fdeaf6" stroke="#ff20e0" stroke-width="1.3"/><path d="M508.5 591.5 H526 M508.5 591.5 V600.5 H514" fill="none" stroke="#3e8a2a" stroke-width="1.2"/><rect x="509.5" y="592.5" width="16" height="6" fill="#e21" /><path d="M515 593 V598 M518 593 V598 M521 593 V598" stroke="#fff" stroke-width="1"/><rect x="510" y="593" width="4" height="5" fill="#333" opacity=".7"/><rect x="516" y="598.5" width="10" height="3" fill="#ff20e0"/><path d="M531 598 V613 M527 597 H542 V601" fill="none" stroke="#3e8a2a" stroke-width="1.1"/><rect x="533" y="603" width="3" height="9" fill="#fff" stroke="#ff20e0" stroke-width="1.2"/><path d="M552.5 595 V610" stroke="#222" stroke-width="1.2"/><path d="M526 590 L531 586 L531 591Z" fill="#fdeaf6" stroke="#b000c0" stroke-width=".8"/><path d="M515.2 565 V619" stroke="#5ee35a" stroke-width="1"/></g></svg>
<div class="a" style="left:27.5px;top:1032.5px;width:13px;height:14px;background:#d8dcd8;box-shadow:0 0 1px #bbb"></div><div class="t" style="left:29.5px;top:1034px;font-size:12px;font-weight:bold;color:#333;text-shadow:0 0 1px #fff,0 0 2px #fff">X</div><svg class="a" style="left:40px;top:1047px" width="30" height="32" viewBox="0 0 30 32"><path d="M2.5 2.5 L20.5 13.5 L16 14.5 L26 28 L23.5 30 L13.5 16.5 L11 20Z" fill="#f06a6a" stroke="#555" stroke-width="1"/><path d="M2.5 2.5 L11 20 L13.5 16.5 Z" fill="#fbd9d9"/><path d="M16 14.5 L26 28 L23.5 30 L13.5 16.5Z" fill="#ddd" stroke="#555" stroke-width="1"/></svg>
<div class="a" style="left:0;top:1162px;width:1253px;height:15px;background:#d9d9d9;border-top:1px solid #c2c2c2"></div>
<div class="t" style="left:8px;top:1164px;font-size:10px;color:#111">For Help, press F1</div>
<div class="a" style="left:901px;top:1163px;width:78px;height:14px;border:1px solid #aaa;background:#dedede"></div>
<div class="t" style="left:906px;top:1165px;font-size:10.5px;color:#111">X:&nbsp;&nbsp;-23400</div>
<div class="a" style="left:981px;top:1163px;width:79px;height:14px;border:1px solid #aaa;background:#dedede"></div>
<div class="t" style="left:986px;top:1165px;font-size:10.5px;color:#111">Y:&nbsp;&nbsp;52200</div>
<div class="a" style="left:1062px;top:1163px;width:53px;height:14px;border:1px solid #aaa;background:#dedede"></div>
<div class="t" style="left:1067px;top:1165px;font-size:10.5px;color:#111">L:&nbsp;&nbsp;65488.5</div>
</div>
<!-- BASIC PALETTE -->
<div class="pal" style="left:9px;top:127px;width:187px;height:203px;background:#fff">
<div class="pt"><svg class="x" width="9" height="9" viewBox="0 0 9 9"><path d="M1 1 L8 8 M8 1 L1 8" stroke="#8c8c8c" stroke-width="1.8" stroke-linecap="round"/></svg><svg class="p" width="9" height="9" viewBox="0 0 9 9"><path d="M4.5 0.5 V8.5 M0.5 4.5 H8.5" stroke="#8c8c8c" stroke-width="2"/></svg><div class="n">Basic</div></div>
<div class="a" style="left:0;top:15px;width:31px;height:25px;background:#cfcfcf"></div>
<div class="a" style="left:0;top:190px;width:187px;height:13px;background:#ececec"></div>
<div class="a" style="left:84px;top:192px;width:18px;height:9px;background:#f8f8f8;border:1px solid #bbb"></div><svg class="a" style="left:89px;top:195px" width="8" height="4" viewBox="0 0 8 4"><path d="M0 0 H8 L4 4Z" fill="#111"/></svg>
<svg width="0" height="0" style="position:absolute"><defs><linearGradient id="lg" x1="0" y1="0" x2="1" y2="1"><stop offset="0" stop-color="#fff"/><stop offset="1" stop-color="#c9c4f6"/></linearGradient></defs></svg>
<svg class="a" style="left:3.0px;top:16.5px" width="26" height="22" viewBox="-13.0 -11.0 26 22"><path d="M-4 -8 L-4 6 L-1 3 L2 9 L4 8 L1 2 L5 2Z" fill="#333" stroke="#111" stroke-width=".8"/></svg>
<svg class="a" style="left:33.0px;top:16.5px" width="26" height="22" viewBox="-13.0 -11.0 26 22"><path d="M-6 0 Q-8 -3 -6 -3 L-3 1 L-4 -7 Q-3 -9 -1 -7 L0 -1 L0 -9 Q2 -10 3 -8 L3 -1 L4 -8 Q6 -9 6 -7 L6 0 L7 -5 Q9 -6 9 -4 L8 4 Q6 9 1 9 Q-3 9 -6 0Z" fill="#e8bf85" stroke="#444" stroke-width=".9"/><path d="M13 11 L13 7 L9 11Z" fill="#111"/></svg>
<svg class="a" style="left:65.0px;top:16.5px" width="26" height="22" viewBox="-13.0 -11.0 26 22"><path d="M-9 -2 Q-11 4 -4 5" fill="none" stroke="#333" stroke-width="1.1"/><path d="M9 -2 Q11 4 4 5" fill="none" stroke="#333" stroke-width="1.1"/><path d="M-3 -9 Q3 -11 3 -4" fill="none" stroke="#333" stroke-width="1.1"/><path d="M3 9 Q-3 11 -3 4" fill="none" stroke="#333" stroke-width="1.1"/><path d="M-6 -3 L-9 -4 L-10 -1Z M6 -3 L9 -4 L10 -1Z M-4 -10 L-1 -10 L-3 -7Z M4 10 L1 10 L3 7Z" fill="#333"/><circle cx="0" cy="0" r="2.2" fill="#6c63e0"/></svg>
<svg class="a" style="left:95.0px;top:16.5px" width="26" height="22" viewBox="-13.0 -11.0 26 22"><circle cx="-3" cy="-3" r="5" fill="#eee" stroke="#333" stroke-width="1.1"/><path d="M-5.5 -3 H-0.5 M-3 -5.5 V-0.5" stroke="#333"/><path d="M1 1 L7 8" stroke="#777" stroke-width="2.5"/></svg>
<svg class="a" style="left:127.0px;top:16.5px" width="26" height="22" viewBox="-13.0 -11.0 26 22"><text x="0" y="7" font-size="19" text-anchor="middle" font-family="Liberation Serif" fill="#111">T</text></svg>
<svg class="a" style="left:158.0px;top:16.5px" width="26" height="22" viewBox="-13.0 -11.0 26 22"><rect x="-2" y="-8" width="12" height="9" fill="#eee" stroke="#333"/><path d="M0 -5 H8 M0 -3 H8 M0 -1 H6" stroke="#999" stroke-width=".8"/><path d="M-2 1 L-10 6" stroke="#333"/><circle cx="-10" cy="6" r="1" fill="#333"/><path d="M13 11 L13 6 L8 11Z" fill="#111"/></svg>
<svg class="a" style="left:3.0px;top:42.0px" width="26" height="22" viewBox="-13.0 -11.0 26 22"><path d="M-4 -4 L4 4 M4 -4 L-4 4" stroke="#133" stroke-width="1.4"/></svg>
<svg class="a" style="left:33.0px;top:42.0px" width="26" height="22" viewBox="-13.0 -11.0 26 22"><path d="M-7 4 L-1 1 L5 4 L-1 7.5Z" fill="#fff" stroke="#333"/><path d="M-7 -5 L-1 -9 L5 -5 L5 1 L-1 5 L-7 1Z" fill="#d6d3f8" stroke="#333"/><path d="M-7 -5 L-1 -1 L5 -5 M-1 -1 V5" fill="none" stroke="#aaa" stroke-width=".7"/><path d="M7 2 Q9 4 9 7" fill="none" stroke="#555" stroke-width="1.8"/><path d="M6.5 6 L9 10 L11.5 6Z" fill="#555"/></svg>
<svg class="a" style="left:65.0px;top:42.0px" width="26" height="22" viewBox="-13.0 -11.0 26 22"><path d="M-6 -6 L6 6" stroke="#333" stroke-width="1.1"/></svg>
<svg class="a" style="left:95.0px;top:42.0px" width="26" height="22" viewBox="-13.0 -11.0 26 22"><path d="M-7 -6 L6 7 M-5 -7 L8 6" stroke="#333" stroke-width="1.1"/></svg>
<svg class="a" style="left:127.0px;top:42.0px" width="26" height="22" viewBox="-13.0 -11.0 26 22"><rect x="-8" y="-6" width="16" height="12" fill="url(#lg)" stroke="#333" stroke-width="1.1"/></svg>
<svg class="a" style="left:158.0px;top:42.0px" width="26" height="22" viewBox="-13.0 -11.0 26 22"><rect x="-8" y="-6" width="16" height="12" rx="3.5" fill="url(#lg)" stroke="#333" stroke-width="1.1"/></svg>
<svg class="a" style="left:3.0px;top:66.7px" width="26" height="22" viewBox="-13.0 -11.0 26 22"><circle cx="0" cy="0" r="7.5" fill="url(#lg)" stroke="#333" stroke-width="1.1"/></svg>
<svg class="a" style="left:33.0px;top:66.7px" width="26" height="22" viewBox="-13.0 -11.0 26 22"><ellipse cx="0" cy="0" rx="8" ry="5.5" fill="url(#lg)" stroke="#333" stroke-width="1.1"/></svg>
<svg class="a" style="left:65.0px;top:66.7px" width="26" height="22" viewBox="-13.0 -11.0 26 22"><path d="M-8 -7 Q5 -7 8 6 L-7 6Z" fill="url(#lg)" stroke="none"/><path d="M-8 -7 Q5 -7 8 6" fill="none" stroke="#333" stroke-width="1.1"/><path d="M13 11 L13 7 L9 11Z" fill="#111"/></svg>
<svg class="a" style="left:95.0px;top:66.7px" width="26" height="22" viewBox="-13.0 -11.0 26 22"><path d="M-10 -1 Q-4 3 1 1 Q8 -3 10 -4 Q8 -7 2 -3 Q-1 2 1 5 Q4 7 9 8" fill="none" stroke="#333" stroke-width="1.1"/></svg>
<svg class="a" style="left:127.0px;top:66.7px" width="26" height="22" viewBox="-13.0 -11.0 26 22"><path d="M-8 6 L-8 0 L-4 -8 L0 1 Q2 -4 6 -2 Q8 0 8 6Z" fill="url(#lg)" stroke="#333" stroke-width="1.1"/></svg>
<svg class="a" style="left:158.0px;top:66.7px" width="26" height="22" viewBox="-13.0 -11.0 26 22"><path d="M-10 -7 L-4 -3 L9 -4 L3 7 L-10 1Z" fill="url(#lg)" stroke="#333" stroke-width="1.1"/><path d="M13 11 L13 6 L8 11Z" fill="#111"/></svg>
<svg class="a" style="left:3.0px;top:92.0px" width="26" height="22" viewBox="-13.0 -11.0 26 22"><path d="M-9 -7 L-3 -3 L9 -4 L3 7 L-9 1Z" fill="#eee" stroke="#333" stroke-width="1.1"/><path d="M-6 -3 L-3 -1 L6 -2 L2 4 L-7 0Z" fill="none" stroke="#888"/></svg>
<svg class="a" style="left:33.0px;top:92.0px" width="26" height="22" viewBox="-13.0 -11.0 26 22"><path d="M-8 0 L-4 -7 L4 -7 L8 0 L4 7 L-4 7Z" fill="url(#lg)" stroke="#333" stroke-width="1.1"/></svg>
<svg class="a" style="left:65.0px;top:92.0px" width="26" height="22" viewBox="-13.0 -11.0 26 22"><circle r="8" fill="none" stroke="#777"/><circle r="6" fill="none" stroke="#777"/><circle r="4" fill="none" stroke="#777"/><circle r="2" fill="none" stroke="#777"/></svg>
<svg class="a" style="left:95.0px;top:92.0px" width="26" height="22" viewBox="-13.0 -11.0 26 22"><circle cx="-6" cy="-7" r="3.2" fill="#333"/><path d="M-8 -4 L-3 -9 L-1 -7 L-6 -2Z" fill="#222"/><path d="M-4 -3 L7 8 L8.5 7 L-2 -5Z" fill="#b9b2f2" stroke="#555" stroke-width=".8"/></svg>
<svg class="a" style="left:127.0px;top:92.0px" width="26" height="22" viewBox="-13.0 -11.0 26 22"><path d="M-7 -8 L-5 -6 L-2 -7 L-4 -4 L-2 -2 L-5 -2 L-7 1 L-7 -2 L-10 -3 L-7 -5Z" fill="#88e8ee" stroke="#333" stroke-width=".6"/><path d="M-4 -3 L9 7" stroke="#222" stroke-width="2.2"/></svg>
<svg class="a" style="left:158.0px;top:92.0px" width="26" height="22" viewBox="-13.0 -11.0 26 22"><path d="M-10 -8 L-10 3 L-7 0 L-5 5 L-4 4 L-6 -1 L-2 -1Z" fill="#111"/><ellipse cx="5" cy="4" rx="6" ry="3.5" fill="#fff" stroke="#333"/><circle cx="5" cy="4" r="2" fill="#335"/></svg>
<svg class="a" style="left:3.0px;top:117.0px" width="26" height="22" viewBox="-13.0 -11.0 26 22"><rect x="-8" y="-7" width="12" height="12" fill="none" stroke="#333"/><rect x="-4" y="-3" width="12" height="10" fill="#fff" stroke="#333"/><rect x="-4" y="-3" width="8" height="8" fill="#cac4f5"/><g fill="#1a5cff"><circle cx="-8" cy="-7" r="1"/><circle cx="-2" cy="-7" r="1"/><circle cx="4" cy="-7" r="1"/><circle cx="-8" cy="-1" r="1"/><circle cx="4" cy="-1" r="1"/><circle cx="-8" cy="5" r="1"/><circle cx="-2" cy="5" r="1"/><circle cx="4" cy="5" r="1"/></g></svg>
<svg class="a" style="left:33.0px;top:117.0px" width="26" height="22" viewBox="-13.0 -11.0 26 22"><path d="M-12 2 L-4 -2 L5 -4 L1 8 L-12 8Z" fill="url(#lg)" stroke="#333" stroke-width="1.1"/><path d="M-9 3 L-4 1 L3 -1 L0 6 L-9 6Z" fill="none" stroke="#999" stroke-width=".6"/><path d="M2 -5 Q4 -10 9 -9 L13 -7 L13 0 L7 -1 Q3 -2 2 -5Z" fill="#f2d2aa" stroke="#555" stroke-width=".7"/><circle cx="5" cy="-4" r="1.5" fill="#fff" stroke="#333" stroke-width=".6"/></svg>
<svg class="a" style="left:65.0px;top:117.0px" width="26" height="22" viewBox="-13.0 -11.0 26 22"><path d="M6 -6 A8 8 0 1 0 -3 7" fill="none" stroke="#5a557e" stroke-width="1.1"/><path d="M-3 7 A8 8 0 0 0 8 1" fill="none" stroke="#5a557e" stroke-dasharray="1.3 1.5" stroke-width="1.5"/><path d="M3 -8 L7 -7 L6 -3Z" fill="#5a557e"/><path d="M-3 0 H3 M0 -3 V3" stroke="#333"/></svg>
<svg class="a" style="left:95.0px;top:117.0px" width="26" height="22" viewBox="-13.0 -11.0 26 22"><path d="M-8 -5 L-2 0 L-8 5Z" fill="#b9b3f2" stroke="#333" stroke-width=".8"/><path d="M8 -5 L2 0 L8 5Z" fill="#b9b3f2" stroke="#333" stroke-width=".8"/><path d="M0 -7 V7" stroke="#333" stroke-dasharray="2 1"/></svg>
<svg class="a" style="left:127.0px;top:117.0px" width="26" height="22" viewBox="-13.0 -11.0 26 22"><path d="M-11 9 L0 0 L3 3Z" fill="#cdc8f6" stroke="#444" stroke-width=".8"/><path d="M0 0 L9 -8 L13 -7 L4 3 L3 3Z" fill="#4a4a4a" stroke="#222" stroke-width=".7"/><path d="M2 -2 L10 -8" stroke="#999" stroke-width=".6"/></svg>
<svg class="a" style="left:158.0px;top:117.0px" width="26" height="22" viewBox="-13.0 -11.0 26 22"><path d="M-9 8 L9 -7 M-6 -7 L9 7" stroke="#6a658f" stroke-width="1.5"/></svg>
<svg class="a" style="left:3.0px;top:141.7px" width="26" height="22" viewBox="-13.0 -11.0 26 22"><path d="M-12 0 L-6 -9 L-3 -1 L1 -3 L3 3 L-3 7 L-9 5Z" fill="#f0cfa0" stroke="#555" stroke-width=".7"/><circle cx="-3" cy="1" r="2.2" fill="none" stroke="#222"/><path d="M-1 3 L10 7 M-1 2 L10 -1" stroke="#222" stroke-width="1.1"/></svg>
<svg class="a" style="left:33.0px;top:141.7px" width="26" height="22" viewBox="-13.0 -11.0 26 22"><path d="M-9 7 V1 Q-9 -6 -2 -7 H10 V7Z" fill="url(#lg)" stroke="none"/><path d="M-9 7 V1 Q-9 -6 -2 -7 H10" fill="none" stroke="#6b6690" stroke-width="1.6"/><path d="M-9 -7 H-2" stroke="#555" stroke-dasharray="1 1" stroke-width=".7"/><path d="M-9 -7 V0" stroke="#555" stroke-dasharray="1 1" stroke-width=".7"/><path d="M-2 2 H4 M1 -1 V5" stroke="#333"/></svg>
<svg class="a" style="left:65.0px;top:141.7px" width="26" height="22" viewBox="-13.0 -11.0 26 22"><path d="M-9 7 V-1 L-3 -7 H10 V7Z" fill="url(#lg)" stroke="none"/><path d="M-9 7 V-1 L-3 -7 H10" fill="none" stroke="#6b6690" stroke-width="1.6"/><path d="M-9 -7 H-3 M-9 -7 V-1" stroke="#555" stroke-dasharray="1 1" stroke-width=".7"/></svg>
<svg class="a" style="left:95.0px;top:141.7px" width="26" height="22" viewBox="-13.0 -11.0 26 22"><path d="M-10 -7 H1 Q10 -7 10 2 V8" fill="none" stroke="#6b6690" stroke-width="1.6"/><path d="M-10 -2 H4 V8" fill="none" stroke="#555" stroke-dasharray="1 1" stroke-width=".8"/><path d="M3 -1 L7 -4 M5 -4 H7 V-2" fill="none" stroke="#333"/></svg>
<svg class="a" style="left:127.0px;top:141.7px" width="26" height="22" viewBox="-13.0 -11.0 26 22"><rect x="-11" y="-8" width="22" height="16" fill="none" stroke="#111" stroke-dasharray="2 1.3" stroke-width="1.1"/><path d="M-3 -4 L6 -6 L9 -2 L0 1Z" fill="#e9a0a6" stroke="#b77" stroke-width=".6"/><path d="M-8 0 L-3 -4 L0 1 L-5 5Z" fill="#3d66f0"/><path d="M0 1 L9 -2 L9 1 L-1 4 L-5 5Z" fill="#c9b5c0"/><path d="M-8 0 L-5 5 L-5 3Z" fill="#2a4ac0"/><path d="M13 11 L13 7 L9 11Z" fill="#111"/></svg>
<svg class="a" style="left:158.0px;top:141.7px" width="26" height="22" viewBox="-13.0 -11.0 26 22"><path d="M-10 0 L8 -8" stroke="#111" stroke-width="1.2"/><path d="M9 -9 L4 -8 L7 -5Z" fill="#111"/><rect x="8" y="-6" width="8" height="4" fill="url(#lg)" stroke="#555"/><rect x="-10" y="3" width="8" height="4" fill="url(#lg)" stroke="#555"/></svg>
<svg class="a" style="left:3.0px;top:166.6px" width="26" height="22" viewBox="-13.0 -11.0 26 22"><rect x="-9" y="-8" width="19" height="16" rx="2" fill="url(#lg)" stroke="#222" stroke-width="1.1"/><circle cx="-10" cy="-3" r="2.8" fill="#fff" stroke="#333"/><circle cx="-10" cy="4" r="2.8" fill="#fff" stroke="#333"/><circle cx="10" cy="0" r="2.8" fill="#fff" stroke="#333"/></svg>
</div>
<!-- TOOL SETS -->
<div class="pal" style="left:9px;top:330px;width:205px;height:549px;background:#ececec">
<div class="pt" style="background:linear-gradient(#cdcdcd,#c4c4c4)"><svg class="x" width="9" height="9" viewBox="0 0 9 9"><path d="M1 1 L8 8 M8 1 L1 8" stroke="#8c8c8c" stroke-width="1.8" stroke-linecap="round"/></svg><svg class="p" width="9" height="9" viewBox="0 0 9 9"><path d="M4.5 0.5 V8.5 M0.5 4.5 H8.5" stroke="#8c8c8c" stroke-width="2"/></svg><div class="n">Tool Sets</div></div>
<div class="a" style="left:0;top:15px;width:194px;height:471px;background:#fff"></div>
<div class="a" style="left:194px;top:15px;width:11px;height:471px;background:#fafafa;border-left:1px solid #e6e6e6"></div>
<div class="a" style="left:197px;top:19px;width:6px;height:236px;background:#c1c1c1;border-radius:3px"></div>
<svg class="a" style="left:5.0px;top:16.0px" width="26" height="22" viewBox="-13.0 -11.0 26 22"><path d="M-9 -5 V6 M9 -5 V6 M-9 0 H9" stroke="#222" stroke-width="1.1"/><path d="M-9 0 L-6 -2 V2Z M9 0 L6 -2 V2Z" fill="#222"/></svg>
<div class="t" style="left:35px;top:22px;font-size:10.8px;color:#111">Constrained Linear Dimension</div>
<svg class="a" style="left:5.0px;top:41.0px" width="26" height="22" viewBox="-13.0 -11.0 26 22"><path d="M-10 -6 L-7 -1 M7 8 L10 3 M-8 -3 L8 5" stroke="#222" stroke-width="1.1"/><path d="M-8 -3 L-4 -3 L-6 0Z M8 5 L4 5 L6 2Z" fill="#222"/></svg>
<div class="t" style="left:35px;top:47px;font-size:10.8px;color:#111">Unconstrained Linear Dimension</div>
<svg class="a" style="left:5.0px;top:66.0px" width="26" height="22" viewBox="-13.0 -11.0 26 22"><path d="M-7 -8 V8 L7 3" fill="none" stroke="#222" stroke-width="1.2"/><path d="M-7 -5 Q3 -5 6 1" fill="none" stroke="#222"/><path d="M-7 -5 L-4 -7 L-4 -3Z M6 1 L3 0 L6 -2Z" fill="#222"/></svg>
<div class="t" style="left:35px;top:72px;font-size:10.8px;color:#111">Angular Dimension</div>
<svg class="a" style="left:5.0px;top:91.0px" width="26" height="22" viewBox="-13.0 -11.0 26 22"><path d="M-9 -5 V6 M9 -5 V6" stroke="#222" stroke-width="1.1"/><path d="M-9 -3 Q0 -6 9 -3 M-9 6 Q0 3 9 6" fill="none" stroke="#222"/><path d="M-9 -3 L-6 -5 L-6 -1Z M9 -3 L6 -5 L6 -1Z" fill="#222"/></svg>
<div class="t" style="left:35px;top:97px;font-size:10.8px;color:#111">Arc Length Dimension</div>
<svg class="a" style="left:5.0px;top:116.0px" width="26" height="22" viewBox="-13.0 -11.0 26 22"><circle r="8" fill="#f4f4f4" stroke="#222" stroke-width="1.1"/><path d="M-5 5 L5 -5" stroke="#222"/><path d="M5 -5 L1 -4 L4 -1Z M-5 5 L-1 4 L-4 1Z" fill="#222"/></svg>
<div class="t" style="left:35px;top:122px;font-size:10.8px;color:#111">Radial Dimension</div>
<svg class="a" style="left:5.0px;top:141.0px" width="26" height="22" viewBox="-13.0 -11.0 26 22"><circle r="7" fill="none" stroke="#222" stroke-width="1.1"/><path d="M0 -10 V10 M-10 0 H10" stroke="#222" stroke-width="1.1"/></svg>
<div class="t" style="left:35px;top:147px;font-size:10.8px;color:#111">Center Mark</div>
<svg class="a" style="left:5.0px;top:166.0px" width="26" height="22" viewBox="-13.0 -11.0 26 22"><text x="-11" y="-2" font-size="9" fill="#3a3aff" font-family="Liberation Sans">Link</text><path d="M-11 -1 H0" stroke="#3a3aff" stroke-width=".8"/><path d="M-6 0 Q-5 -4 -3 -1 L-3 -5 Q-2 -7 -1 -5 L0 0 L1 -2 Q3 -3 3 0 Q5 -1 5 2 L5 6 Q3 10 -1 9 Q-4 8 -6 0Z" fill="#efbf82" stroke="#9a7a50" stroke-width=".7"/></svg>
<div class="t" style="left:35px;top:172px;font-size:10.8px;color:#111">Hyperlink</div>
<svg class="a" style="left:5.0px;top:191.0px" width="26" height="22" viewBox="-13.0 -11.0 26 22"><text x="-2" y="-3" font-size="8" fill="#3a3aff" font-family="Liberation Sans">12</text><text x="-12" y="7" font-size="8" fill="#3a3aff" font-family="Liberation Sans">n</text><path d="M-7 8 L10 0 H-6 Z" fill="#fff" stroke="#222" stroke-width="1.1"/></svg>
<div class="t" style="left:35px;top:197px;font-size:10.8px;color:#111">Slope Dimension</div>
<svg class="a" style="left:5.0px;top:216.0px" width="26" height="22" viewBox="-13.0 -11.0 26 22"><circle cx="-5" cy="-5" r="3" fill="#fff" stroke="#222"/><circle cx="5" cy="-5" r="3" fill="#fff" stroke="#222"/><path d="M-11 2 H11" stroke="#222" stroke-dasharray="2.5 1.5"/><path d="M-5 -2 V9 M5 -2 V9" stroke="#222" stroke-width="1"/><rect x="-1" y="1" width="2" height="2" fill="#33f"/></svg>
<div class="t" style="left:35px;top:222px;font-size:10.8px;color:#111">Grid Bubble</div>
<svg class="a" style="left:5.0px;top:241.0px" width="26" height="22" viewBox="-13.0 -11.0 26 22"><path d="M-11 1 H-4 L-2 -5 L1 7 L3 1 H11" fill="none" stroke="#222" stroke-width="1.1"/></svg>
<div class="t" style="left:35px;top:247px;font-size:10.8px;color:#111">Break Line</div>
<svg class="a" style="left:5.0px;top:266.0px" width="26" height="22" viewBox="-13.0 -11.0 26 22"><path d="M2 -9 V4 M-10 4 H2" stroke="#222" stroke-width="1.1"/><rect x="1" y="2" width="4" height="4" fill="none" stroke="#2a2"/></svg>
<div class="t" style="left:35px;top:272px;font-size:10.8px;color:#111">Constrain Coincident</div>
<svg class="a" style="left:5.0px;top:291.0px" width="26" height="22" viewBox="-13.0 -11.0 26 22"><circle cx="-3" cy="-3" r="6" fill="#9a9a9a" stroke="#555"/><path d="M0 2 L8 6 L6 9 L-1 5Z" fill="#f3e14c" stroke="#666" stroke-width=".7"/></svg>
<div class="t" style="left:35px;top:297px;font-size:10.8px;color:#111">Tape Measure</div>
<svg class="a" style="left:5.0px;top:316.0px" width="26" height="22" viewBox="-13.0 -11.0 26 22"><path d="M-10 8 Q-10 -8 6 -8 L8 6Z" fill="#ddd8fb" stroke="#555"/><path d="M-6 5 Q-6 -3 3 -4 L4 4Z" fill="#fff" stroke="#555" stroke-width=".8"/></svg>
<div class="t" style="left:35px;top:322px;font-size:10.8px;color:#111">Protractor</div>
<svg class="a" style="left:5.0px;top:341.0px" width="26" height="22" viewBox="-13.0 -11.0 26 22"><path d="M-10 -8 H9 Q10 -8 10 -7 V4 Q10 5 9 5 H2 L-1 9 L-1 5 H-10 Q-11 5 -11 4 V-7 Q-11 -8 -10 -8Z" fill="#dcd8fb" stroke="#444"/><path d="M-7 -4 H7 M-7 -1 H7 M-7 2 H4" stroke="#9c97c9" stroke-width=".8"/></svg>
<div class="t" style="left:35px;top:347px;font-size:10.8px;color:#111">General Notes</div>
<svg class="a" style="left:5.0px;top:366.0px" width="26" height="22" viewBox="-13.0 -11.0 26 22"><path d="M-7 4 L4 -8 L7 -6 L-4 6Z" fill="#cbc5f6" stroke="#444" stroke-width=".8"/><path d="M4 -8 L7 -6 L8 -8 L6 -10Z" fill="#d23"/><path d="M-10 8 H10" stroke="#d22" stroke-width="1.2"/></svg>
<div class="t" style="left:35px;top:372px;font-size:10.8px;color:#111">Redline</div>
<svg class="a" style="left:5.0px;top:391.0px" width="26" height="22" viewBox="-13.0 -11.0 26 22"><path d="M-7 5 L4 -8 L7 -6 L-4 7Z" fill="#cbc5f6" stroke="#444" stroke-width=".8"/><g fill="#222"><circle cx="-10" cy="-5" r=".8"/><circle cx="-7" cy="-8" r=".8"/><circle cx="-9" cy="0" r=".8"/><circle cx="8" cy="0" r=".8"/><circle cx="10" cy="4" r=".8"/><circle cx="5" cy="6" r=".8"/><circle cx="0" cy="9" r=".8"/><circle cx="9" cy="8" r=".8"/><circle cx="-3" cy="-8" r=".8"/><circle cx="3" cy="3" r=".8"/></g></svg>
<div class="t" style="left:35px;top:397px;font-size:10.8px;color:#111">Stipple</div>
<svg class="a" style="left:5.0px;top:416.0px" width="26" height="22" viewBox="-13.0 -11.0 26 22"><path d="M-9 4 Q-13 0 -9 -3 Q-9 -9 -3 -7 Q0 -11 4 -7 Q10 -8 9 -2 Q13 2 8 5 Q6 10 1 7 Q-3 10 -5 6 Q-9 8 -9 4Z" fill="#fff" stroke="#77729e" stroke-width="1.1"/></svg>
<div class="t" style="left:35px;top:422px;font-size:10.8px;color:#111">Revision Cloud</div>
<svg class="a" style="left:5.0px;top:441.0px" width="26" height="22" viewBox="-13.0 -11.0 26 22"><rect x="-11" y="-8" width="22" height="16" fill="#fff" stroke="#111" stroke-width="1.5"/><rect x="-8" y="-5" width="16" height="10" fill="#fff" stroke="#111" stroke-dasharray="1.5 1"/></svg>
<div class="t" style="left:35px;top:447px;font-size:10.8px;color:#111">Sheet Border</div>
<svg class="a" style="left:5.0px;top:466.0px" width="26" height="22" viewBox="-13.0 -11.0 26 22"><circle cx="-5" cy="0" r="5" fill="#ebe8fb" stroke="#333"/><path d="M-10 0 H0 M1 -1.5 H11 M1 1.5 H11" stroke="#444" stroke-width=".7"/></svg>
<div class="t" style="left:35px;top:472px;font-size:10.8px;color:#111">Drawing Label</div>
<div class="a" style="left:0;top:486px;width:205px;height:63px;background:#ececec"></div>
<div class="a" style="left:1px;top:486px;width:31px;height:25px;background:#f0f0f0;border:1px solid #c6c6c6"></div>
<svg class="a" style="left:3.5px;top:487.5px" width="26" height="22" viewBox="-13.0 -11.0 26 22"><path d="M-10 3 L0 -6 L10 3 L0 10Z" fill="#eee" stroke="#555"/><circle cx="-4" cy="-1" r="3" fill="#6c6"/><circle cx="1" cy="-4" r="3" fill="#6c6"/><circle cx="4" cy="1" r="3" fill="#6c6"/><circle cx="-1" cy="3" r="3" fill="#6c6"/><path d="M-2 8 L3 -2" stroke="#e9a" stroke-width="2"/></svg>
<div class="a" style="left:32px;top:486px;width:31px;height:25px;background:#f0f0f0;border:1px solid #c6c6c6"></div>
<svg class="a" style="left:34.5px;top:487.5px" width="26" height="22" viewBox="-13.0 -11.0 26 22"><path d="M-11 0 L0 -7 L11 0 L0 7Z" fill="#fff" stroke="#c9915a" stroke-width="2"/><path d="M-6 0 L0 -4 L6 0 L0 4Z" fill="#dff"/></svg>
<div class="a" style="left:63px;top:486px;width:31px;height:25px;background:#f0f0f0;border:1px solid #c6c6c6"></div>
<svg class="a" style="left:65.5px;top:487.5px" width="26" height="22" viewBox="-13.0 -11.0 26 22"><path d="M-7 -1 L0 -8 L7 -1 V8 H-7Z" fill="#fff" stroke="#888"/><path d="M-9 0 L0 -9 L9 0" fill="none" stroke="#d9a070" stroke-width="2.5"/><rect x="-4" y="2" width="2" height="3" fill="#555"/><rect x="2" y="3" width="3" height="5" fill="#555"/></svg>
<div class="a" style="left:94px;top:486px;width:31px;height:25px;background:#f0f0f0;border:1px solid #c6c6c6"></div>
<svg class="a" style="left:96.5px;top:487.5px" width="26" height="22" viewBox="-13.0 -11.0 26 22"><circle cx="2" cy="-3" r="5" fill="#e33"/><path d="M-9 -1 L-2 -4 L3 -1 V6 L-4 9 L-9 6Z" fill="#3b6fe8"/><path d="M4 -4 L10 8 H-1Z" fill="#4c4"/></svg>
<div class="a" style="left:125px;top:486px;width:31px;height:25px;background:#f0f0f0;border:1px solid #c6c6c6"></div>
<svg class="a" style="left:127.5px;top:487.5px" width="26" height="22" viewBox="-13.0 -11.0 26 22"><circle cx="2" cy="-2" r="6.5" fill="#f5ea50" stroke="#b9a520"/><path d="M-3 3 L-8 7" stroke="#888" stroke-width="3"/></svg>
<div class="a" style="left:156px;top:486px;width:31px;height:25px;background:#f0f0f0;border:1px solid #c6c6c6"></div>
<svg class="a" style="left:158.5px;top:487.5px" width="26" height="22" viewBox="-13.0 -11.0 26 22"><path d="M-8 -6 L6 -8 L9 -4 V7 L-7 8 L-9 -4Z" fill="#b98248" stroke="#7a5530"/><path d="M-2 -1 H9" stroke="#333" stroke-width="2"/></svg>
<div class="a" style="left:1px;top:511px;width:31px;height:25px;background:#d4d4d4;border:1px solid #c6c6c6"></div>
<svg class="a" style="left:3.5px;top:512.5px" width="26" height="22" viewBox="-13.0 -11.0 26 22"><path d="M-10 7 L4 -9 L9 -6 L-5 9Z" fill="#e6e6e6" stroke="#999"/><path d="M-1 9 L8 -6 L10 -5 L1 10Z" fill="#3a6fe0" stroke="#223"/><path d="M8 -6 L9 -9 L11 -7Z" fill="#d33"/></svg>
<div class="a" style="left:32px;top:511px;width:31px;height:25px;background:#f0f0f0;border:1px solid #c6c6c6"></div>
<svg class="a" style="left:34.5px;top:512.5px" width="26" height="22" viewBox="-13.0 -11.0 26 22"><path d="M-9 4 Q-10 -2 -5 -2 L0 -6 Q4 -10 6 -5 L5 -1 Q10 2 7 6 Q3 8 0 4 L-4 8 Q-8 9 -9 4Z" fill="#6a95ee" stroke="#3a5fc0"/></svg>
<div class="a" style="left:63px;top:511px;width:31px;height:25px;background:#f0f0f0;border:1px solid #c6c6c6"></div>
<svg class="a" style="left:65.5px;top:512.5px" width="26" height="22" viewBox="-13.0 -11.0 26 22"><path d="M-11 -6 L5 -9 L11 -6 L-5 -3Z" fill="#ddd" stroke="#777"/><path d="M-11 -6 L-5 -3 L5 6 L-1 3Z" fill="#bbb" stroke="#777"/><path d="M4 -2 V8 M1 -2 H8 M1 8 H8" stroke="#444" stroke-width="1.5"/></svg>
<div class="a" style="left:94px;top:511px;width:31px;height:25px;background:#f0f0f0;border:1px solid #c6c6c6"></div>
<svg class="a" style="left:96.5px;top:512.5px" width="26" height="22" viewBox="-13.0 -11.0 26 22"><circle cx="-5" cy="-3" r="5" fill="#555" stroke="#222"/><circle cx="4" cy="3" r="5.5" fill="#666" stroke="#222"/><path d="M-2 -2 L3 1" stroke="#ccc" stroke-width="3"/></svg>
<div class="a" style="left:125px;top:511px;width:31px;height:25px;background:#f0f0f0;border:1px solid #c6c6c6"></div>
<svg class="a" style="left:127.5px;top:512.5px" width="26" height="22" viewBox="-13.0 -11.0 26 22"><g transform="rotate(10)"><circle r="7" fill="#999" stroke="#555" stroke-width="3" stroke-dasharray="2.5 1.5"/><circle r="5" fill="#aaa"/><circle r="1.8" fill="#eee"/></g></svg>
<div class="a" style="left:93px;top:538px;width:18px;height:9px;background:#f8f8f8;border:1px solid #bbb"></div><svg class="a" style="left:98px;top:541px" width="8" height="4" viewBox="0 0 8 4"><path d="M0 0 H8 L4 4Z" fill="#111"/></svg>
</div>
<!-- RESOURCE MANAGER -->
<div class="pal" style="left:117px;top:880px;width:343px;height:320px">
<div class="pt"><svg class="x" width="9" height="9" viewBox="0 0 9 9"><path d="M1 1 L8 8 M8 1 L1 8" stroke="#8c8c8c" stroke-width="1.6"/></svg><svg class="p" width="9" height="9" viewBox="0 0 9 9"><path d="M4.5 0.5 V8.5 M0.5 4.5 H8.5" stroke="#8c8c8c" stroke-width="1.8"/></svg><div class="n" style="font-size:11.6px">Resource Manager</div></div>
<div class="a" style="left:5px;top:20px;width:44px;height:18px;background:#fff;border:1px solid #bdbdbd;border-radius:4px;overflow:hidden"><div class="a" style="left:26px;top:-1px;width:18px;height:18px;background:linear-gradient(#6aa7ff,#2f6ff0)"></div></div>
<svg class="a" style="left:12.0px;top:22.0px" width="14" height="14" viewBox="-7.0 -7.0 14 14"><g><circle r="5" fill="#ddd" stroke="#999" stroke-width="2.5" stroke-dasharray="1.6 1.2"/><circle r="2" fill="#fff" stroke="#999"/></g></svg>
<svg class="a" style="left:37px;top:26px" width="8" height="5" viewBox="0 0 8 5"><path d="M0.7 0.7 L4 4 L7.3 0.7" fill="none" stroke="#fff" stroke-width="1.4"/></svg>
<div class="a" style="left:60px;top:21px;width:52px;height:17px;background:#fff;border:1px solid #bdbdbd;border-radius:4px"></div><div class="a" style="left:86px;top:22px;width:1px;height:15px;background:#ccc"></div>
<svg class="a" style="left:66.0px;top:23.5px" width="14" height="12" viewBox="-7.0 -6.0 14 12"><path d="M-6 0 L0 -5 V-2 H6 V2 H0 V5Z" fill="#c9c4f6" stroke="#8a84c0" stroke-width=".8"/></svg>
<svg class="a" style="left:92.0px;top:23.5px" width="14" height="12" viewBox="-7.0 -6.0 14 12"><path d="M6 0 L0 -5 V-2 H-6 V2 H0 V5Z" fill="#c9c4f6" stroke="#8a84c0" stroke-width=".8"/></svg>
<div class="a" style="left:123px;top:21px;width:189px;height:18px;background:#fff;border:1px solid #c6c6c6;border-radius:4px"></div>
<svg class="a" style="left:182px;top:24px" width="12" height="12" viewBox="0 0 12 12"><circle cx="5" cy="5" r="3.8" fill="none" stroke="#777" stroke-width="1.1"/><path d="M7.8 7.8 L11 11" stroke="#777" stroke-width="1.2"/></svg>
<div class="t" style="left:198px;top:24px;font-size:11.6px;color:#a9a9a9">Search</div>
<div class="t" style="left:324px;top:22px;font-size:13px;color:#333">&#187;</div>
<div class="a" style="left:5px;top:43px;width:150px;height:252px;background:#fff;border:1px solid #cfcfcf"></div>
<div class="a" style="left:0;top:0;width:142px;height:295px;overflow:hidden">
<div class="a" style="left:6px;top:43px;width:136px;height:19px;background:#f1f1f1;border-bottom:1px solid #d8d8d8"></div>
<svg class="a" style="left:12px;top:49px" width="9" height="8" viewBox="0 0 9 8"><path d="M0 0 H9 L4.5 8Z" fill="#666"/></svg>
<svg class="a" style="left:24px;top:45px" width="15" height="15" viewBox="0 0 15 15"><circle cx="7.5" cy="7.5" r="7" fill="#3dbfa6"/><circle cx="7.5" cy="7.5" r="5" fill="none" stroke="#bff0e4" stroke-width=".8"/><path d="M5 5 L7.5 10 L10 5" fill="none" stroke="#fff" stroke-width="1.2"/></svg>
<div class="t" style="left:42px;top:47px;font-size:11.6px;font-weight:bold">Open Files</div>
<div class="a" style="left:6px;top:62px;width:136px;height:19px;background:#dcdcdc;border-bottom:1px solid #d8d8d8"></div>
<svg class="a" style="left:31px;top:67px" width="8" height="9" viewBox="0 0 8 9"><path d="M0 0 V9 L8 4.5Z" fill="#777"/></svg>
<svg class="a" style="left:42px;top:64px" width="13" height="15" viewBox="0 0 13 15"><path d="M0 0 H9 L13 4 V15 H0Z" fill="#36b79c"/><circle cx="6.5" cy="7" r="4" fill="none" stroke="#dff" stroke-width="1"/><path d="M5 5 L6.5 9 L8 5" fill="none" stroke="#fff"/></svg>
<div class="t" style="left:60px;top:66px;font-size:11.6px;font-weight:bold">03_Prop Plans</div>
<div class="a" style="left:6px;top:81px;width:136px;height:19px;background:#f3f3f3;border-bottom:1px solid #d8d8d8"></div>
<svg class="a" style="left:24px;top:83px" width="15" height="15" viewBox="0 0 15 15"><path d="M7.5 0.5 L9.5 5.3 L14.5 5.5 L10.5 8.7 L12 14 L7.5 11 L3 14 L4.5 8.7 L0.5 5.5 L5.5 5.3Z" fill="#d9cf2c" stroke="#8a8a20" stroke-width=".8"/></svg>
<div class="t" style="left:42px;top:85px;font-size:11.6px;font-weight:bold">Favorites</div>
<div class="a" style="left:6px;top:100px;width:136px;height:19px;background:#efefef;border-bottom:1px solid #d8d8d8"></div>
<svg class="a" style="left:13px;top:105px" width="8" height="9" viewBox="0 0 8 9"><path d="M0 0 V9 L8 4.5Z" fill="#777"/></svg>
<svg class="a" style="left:24px;top:103px" width="17" height="13" viewBox="0 0 17 13"><path d="M3 12 Q0 12 0.5 8.5 Q1 6 3.5 6.5 Q4 1 9 1 Q13 1 13.5 5.5 Q16.5 6 16.5 9 Q16.5 12 13.5 12Z" fill="#c4bff4" stroke="#8e88cc" stroke-width=".8"/></svg>
<div class="t" style="left:42px;top:104px;font-size:11.6px;font-weight:bold">Subscription Libr</div>
<div class="a" style="left:6px;top:119px;width:136px;height:19px;background:#efefef;border-bottom:1px solid #d8d8d8"></div>
<svg class="a" style="left:12px;top:125px" width="9" height="8" viewBox="0 0 9 8"><path d="M0 0 H9 L4.5 8Z" fill="#666"/></svg>
<svg class="a" style="left:24px;top:121px" width="15" height="15" viewBox="0 0 15 15"><circle cx="7.5" cy="7.5" r="7" fill="#3dbfa6"/><circle cx="7.5" cy="7.5" r="5" fill="none" stroke="#bff0e4" stroke-width=".8"/><path d="M5 5 L7.5 10 L10 5" fill="none" stroke="#fff" stroke-width="1.2"/></svg>
<div class="t" style="left:42px;top:123px;font-size:11.6px;font-weight:bold">Vectorworks Libr</div>
<svg class="a" style="left:31px;top:143px" width="8" height="9" viewBox="0 0 8 9"><path d="M0 0 V9 L8 4.5Z" fill="#888"/></svg>
<svg class="a" style="left:41px;top:141px" width="16" height="14" viewBox="0 0 16 14"><path d="M0.5 1.5 Q0.5 0.5 1.5 0.5 H6 L7 2 H14.5 Q15.5 2 15.5 3 V13.5 H0.5Z" fill="#f2d860" stroke="#cdb445" stroke-width=".6"/><path d="M0.5 3.5 H15.5 V13.5 H0.5Z" fill="#f9e07a" stroke="#cdb445" stroke-width=".6"/></svg>
<div class="t" style="left:60px;top:142px;font-size:11.6px">Defaults</div>
<svg class="a" style="left:31px;top:162px" width="8" height="9" viewBox="0 0 8 9"><path d="M0 0 V9 L8 4.5Z" fill="#888"/></svg>
<svg class="a" style="left:41px;top:160px" width="16" height="14" viewBox="0 0 16 14"><path d="M0.5 1.5 Q0.5 0.5 1.5 0.5 H6 L7 2 H14.5 Q15.5 2 15.5 3 V13.5 H0.5Z" fill="#f2d860" stroke="#cdb445" stroke-width=".6"/><path d="M0.5 3.5 H15.5 V13.5 H0.5Z" fill="#f9e07a" stroke="#cdb445" stroke-width=".6"/></svg>
<div class="t" style="left:60px;top:161px;font-size:11.6px">Object Styles</div>
<svg class="a" style="left:31px;top:181px" width="8" height="9" viewBox="0 0 8 9"><path d="M0 0 V9 L8 4.5Z" fill="#888"/></svg>
<svg class="a" style="left:41px;top:179px" width="16" height="14" viewBox="0 0 16 14"><path d="M0.5 1.5 Q0.5 0.5 1.5 0.5 H6 L7 2 H14.5 Q15.5 2 15.5 3 V13.5 H0.5Z" fill="#f2d860" stroke="#cdb445" stroke-width=".6"/><path d="M0.5 3.5 H15.5 V13.5 H0.5Z" fill="#f9e07a" stroke="#cdb445" stroke-width=".6"/></svg>
<div class="t" style="left:60px;top:180px;font-size:11.6px">Objects - Archi</div>
<svg class="a" style="left:31px;top:200px" width="8" height="9" viewBox="0 0 8 9"><path d="M0 0 V9 L8 4.5Z" fill="#888"/></svg>
<svg class="a" style="left:41px;top:198px" width="16" height="14" viewBox="0 0 16 14"><path d="M0.5 1.5 Q0.5 0.5 1.5 0.5 H6 L7 2 H14.5 Q15.5 2 15.5 3 V13.5 H0.5Z" fill="#f2d860" stroke="#cdb445" stroke-width=".6"/><path d="M0.5 3.5 H15.5 V13.5 H0.5Z" fill="#f9e07a" stroke="#cdb445" stroke-width=".6"/></svg>
<div class="t" style="left:60px;top:199px;font-size:11.6px">Objects - Build</div>
<svg class="a" style="left:31px;top:219px" width="8" height="9" viewBox="0 0 8 9"><path d="M0 0 V9 L8 4.5Z" fill="#888"/></svg>
<svg class="a" style="left:41px;top:217px" width="16" height="14" viewBox="0 0 16 14"><path d="M0.5 1.5 Q0.5 0.5 1.5 0.5 H6 L7 2 H14.5 Q15.5 2 15.5 3 V13.5 H0.5Z" fill="#f2d860" stroke="#cdb445" stroke-width=".6"/><path d="M0.5 3.5 H15.5 V13.5 H0.5Z" fill="#f9e07a" stroke="#cdb445" stroke-width=".6"/></svg>
<div class="t" style="left:60px;top:218px;font-size:11.6px">Objects - Build</div>
<svg class="a" style="left:31px;top:238px" width="8" height="9" viewBox="0 0 8 9"><path d="M0 0 V9 L8 4.5Z" fill="#888"/></svg>
<svg class="a" style="left:41px;top:236px" width="16" height="14" viewBox="0 0 16 14"><path d="M0.5 1.5 Q0.5 0.5 1.5 0.5 H6 L7 2 H14.5 Q15.5 2 15.5 3 V13.5 H0.5Z" fill="#f2d860" stroke="#cdb445" stroke-width=".6"/><path d="M0.5 3.5 H15.5 V13.5 H0.5Z" fill="#f9e07a" stroke="#cdb445" stroke-width=".6"/></svg>
<div class="t" style="left:60px;top:237px;font-size:11.6px">Objects - Build</div>
<svg class="a" style="left:31px;top:257px" width="8" height="9" viewBox="0 0 8 9"><path d="M0 0 V9 L8 4.5Z" fill="#888"/></svg>
<svg class="a" style="left:41px;top:255px" width="16" height="14" viewBox="0 0 16 14"><path d="M0.5 1.5 Q0.5 0.5 1.5 0.5 H6 L7 2 H14.5 Q15.5 2 15.5 3 V13.5 H0.5Z" fill="#f2d860" stroke="#cdb445" stroke-width=".6"/><path d="M0.5 3.5 H15.5 V13.5 H0.5Z" fill="#f9e07a" stroke="#cdb445" stroke-width=".6"/></svg>
<div class="t" style="left:60px;top:256px;font-size:11.6px">Objects - Enter</div>
<svg class="a" style="left:31px;top:276px" width="8" height="9" viewBox="0 0 8 9"><path d="M0 0 V9 L8 4.5Z" fill="#888"/></svg>
<svg class="a" style="left:41px;top:274px" width="16" height="14" viewBox="0 0 16 14"><path d="M0.5 1.5 Q0.5 0.5 1.5 0.5 H6 L7 2 H14.5 Q15.5 2 15.5 3 V13.5 H0.5Z" fill="#f2d860" stroke="#cdb445" stroke-width=".6"/><path d="M0.5 3.5 H15.5 V13.5 H0.5Z" fill="#f9e07a" stroke="#cdb445" stroke-width=".6"/></svg>
<div class="t" style="left:60px;top:275px;font-size:11.6px">Objects - Enter</div>
<svg class="a" style="left:31px;top:295px" width="8" height="9" viewBox="0 0 8 9"><path d="M0 0 V9 L8 4.5Z" fill="#888"/></svg>
<svg class="a" style="left:41px;top:293px" width="16" height="14" viewBox="0 0 16 14"><path d="M0.5 1.5 Q0.5 0.5 1.5 0.5 H6 L7 2 H14.5 Q15.5 2 15.5 3 V13.5 H0.5Z" fill="#f2d860" stroke="#cdb445" stroke-width=".6"/><path d="M0.5 3.5 H15.5 V13.5 H0.5Z" fill="#f9e07a" stroke="#cdb445" stroke-width=".6"/></svg>
<div class="t" style="left:60px;top:294px;font-size:11.6px">Objects</div>
</div>
<div class="a" style="left:6px;top:295px;width:150px;height:5px;background:#ececec"></div>
<div class="a" style="left:142px;top:44px;width:12px;height:250px;background:#fafafa;border-left:1px solid #e3e3e3"></div>
<div class="a" style="left:145px;top:47px;width:6px;height:168px;background:#c4c4c4;border-radius:3px"></div>
<div class="a" style="left:158px;top:170px;width:2px;height:2px;background:#777"></div>
<div class="a" style="left:334px;top:170px;width:2px;height:2px;background:#777"></div>
<div class="a" style="left:158px;top:175px;width:2px;height:2px;background:#777"></div>
<div class="a" style="left:334px;top:175px;width:2px;height:2px;background:#777"></div>
<div class="a" style="left:158px;top:180px;width:2px;height:2px;background:#777"></div>
<div class="a" style="left:334px;top:180px;width:2px;height:2px;background:#777"></div>
<div class="a" style="left:162px;top:43px;width:170px;height:252px;background:#fff;border:1px solid #cfcfcf"></div>
<div class="a" style="left:163px;top:63px;width:168px;height:1px;background:#cfcfcf"></div>
<div class="t" style="left:166px;top:47px;font-size:12px">...lans v2017.vwx&nbsp;&nbsp;&nbsp;(124 Items)</div>
<div class="a" style="left:318px;top:64px;width:13px;height:230px;background:#fafafa;border-left:1px solid #ececec"></div>
<div class="a" style="left:321px;top:67px;width:6px;height:19px;background:#c4c4c4;border-radius:3px"></div>
<svg class="a" style="left:167px;top:76px" width="65" height="49" viewBox="0 0 65 49"><defs><linearGradient id="rf" x1="0" y1="0" x2="0" y2="1"><stop offset="0" stop-color="#dcd8fb"/><stop offset="1" stop-color="#9a92ee"/></linearGradient></defs><path d="M0.5 0.5 H20 V4 H64.5 V10 H0.5Z" fill="#c48a5c"/><rect x="0.5" y="9.5" width="64" height="39" rx="2" fill="url(#rf)" stroke="#8e87c4"/><path d="M32.5 14 L43 20 V33 L32.5 39 L22 33 V20Z" fill="#e6c6a0" stroke="#b87a48" stroke-width="1.8"/><path d="M22 20 L32.5 26 L43 20 M32.5 26 V39" fill="none" stroke="#b87a48" stroke-width="1.5"/></svg>
<svg class="a" style="left:239px;top:76px" width="65" height="49" viewBox="0 0 65 49"><defs><linearGradient id="rf" x1="0" y1="0" x2="0" y2="1"><stop offset="0" stop-color="#dcd8fb"/><stop offset="1" stop-color="#9a92ee"/></linearGradient></defs><path d="M0.5 0.5 H20 V4 H64.5 V10 H0.5Z" fill="#c48a5c"/><rect x="0.5" y="9.5" width="64" height="39" rx="2" fill="url(#rf)" stroke="#8e87c4"/><path d="M28 16 Q33 11 38 15 Q40 19 35 22 L31 26 Q27 30 31 33 Q35 36 38 32" fill="none" stroke="#b87a48" stroke-width="5"/><path d="M28 16 Q33 11 38 15 Q40 19 35 22 L31 26 Q27 30 31 33 Q35 36 38 32" fill="none" stroke="#e6c6a0" stroke-width="2.5"/></svg>
<svg class="a" style="left:167px;top:216px" width="65" height="49" viewBox="0 0 65 49"><defs><linearGradient id="rf" x1="0" y1="0" x2="0" y2="1"><stop offset="0" stop-color="#dcd8fb"/><stop offset="1" stop-color="#9a92ee"/></linearGradient></defs><path d="M0.5 0.5 H20 V4 H64.5 V10 H0.5Z" fill="#c48a5c"/><rect x="0.5" y="9.5" width="64" height="39" rx="2" fill="url(#rf)" stroke="#8e87c4"/><path d="M32.5 14 L43 20 V33 L32.5 39 L22 33 V20Z" fill="#e6c6a0" stroke="#b87a48" stroke-width="1.8"/><path d="M22 20 L32.5 26 L43 20 M32.5 26 V39" fill="none" stroke="#b87a48" stroke-width="1.5"/></svg>
<svg class="a" style="left:239px;top:216px" width="65" height="49" viewBox="0 0 65 49"><defs><linearGradient id="rf" x1="0" y1="0" x2="0" y2="1"><stop offset="0" stop-color="#dcd8fb"/><stop offset="1" stop-color="#9a92ee"/></linearGradient></defs><path d="M0.5 0.5 H20 V4 H64.5 V10 H0.5Z" fill="#c48a5c"/><rect x="0.5" y="9.5" width="64" height="39" rx="2" fill="url(#rf)" stroke="#8e87c4"/><path d="M32.5 14 L43 20 V33 L32.5 39 L22 33 V20Z" fill="#e6c6a0" stroke="#b87a48" stroke-width="1.8"/><path d="M22 20 L32.5 26 L43 20 M32.5 26 V39" fill="none" stroke="#b87a48" stroke-width="1.5"/></svg>
<div class="t" style="left:159px;top:139px;width:80px;text-align:center;font-size:11.6px">L</div>
<div class="t" style="left:159px;top:153px;width:80px;text-align:center;font-size:11.6px">STANDAR</div>
<div class="t" style="left:159px;top:167px;width:80px;text-align:center;font-size:11.6px">D</div>
<div class="t" style="left:159px;top:181px;width:80px;text-align:center;font-size:11.6px">SYMBOLS</div>
<div class="t" style="left:231px;top:139px;width:80px;text-align:center;font-size:11.6px">Saved</div>
<div class="t" style="left:231px;top:153px;width:80px;text-align:center;font-size:11.6px">Views</div>
<div class="t" style="left:159px;top:279px;width:80px;text-align:center;font-size:11.6px">reference</div>
<div class="t" style="left:231px;top:279px;width:80px;text-align:center;font-size:11.6px">title sheets</div>
<div class="a" style="left:6px;top:300px;width:101px;height:16px;background:#fff;border:1px solid #c2c2c2;border-radius:4px"></div>
<div class="t" style="left:13px;top:302px;font-size:11.6px">New Resource...</div>
<div class="a" style="left:123px;top:300px;width:84px;height:16px;background:#fff;border:1px solid #c2c2c2;border-radius:4px"></div>
<div class="t" style="left:131px;top:302px;font-size:11.6px">New Folder...</div>
<svg class="a" style="left:333px;top:310px" width="8" height="8" viewBox="0 0 8 8"><circle cx="6" cy="2" r=".9" fill="#666"/><circle cx="3" cy="5" r=".9" fill="#666"/><circle cx="6" cy="5" r=".9" fill="#666"/></svg>
</div>
<!-- SNAPPING -->
<div class="pal" style="left:17px;top:1100px;width:100px;height:77px">
<div class="pt" style="height:14px"><svg class="x" width="9" height="9" viewBox="0 0 9 9"><path d="M1 1 L8 8 M8 1 L1 8" stroke="#8c8c8c" stroke-width="1.6"/></svg><svg class="p" width="9" height="9" viewBox="0 0 9 9"><path d="M4.5 0.5 V8.5 M0.5 4.5 H8.5" stroke="#8c8c8c" stroke-width="1.8"/></svg><div class="n" style="top:0">Snapping</div></div>
<div class="a" style="left:0px;top:14px;width:31px;height:25px;background:#f0f0f0;border:1px solid #c6c6c6"></div>
<svg class="a" style="left:2.5px;top:15.5px" width="26" height="22" viewBox="-13.0 -11.0 26 22"><path d="M-6 -10 V10 M6 -10 V10 M-11 -5 H11 M-11 5 H11" stroke="#111" stroke-width="1.2"/><g fill="#fff" stroke="#22f" stroke-width="1.1"><circle cx="-6" cy="-5" r="1.6"/><circle cx="6" cy="-5" r="1.6"/><circle cx="-6" cy="5" r="1.6"/><circle cx="6" cy="5" r="1.6"/></g></svg>
<div class="a" style="left:31px;top:14px;width:31px;height:25px;background:#d4d4d4;border:1px solid #c6c6c6"></div>
<svg class="a" style="left:33.5px;top:15.5px" width="26" height="22" viewBox="-13.0 -11.0 26 22"><rect x="-8" y="-5" width="16" height="10" fill="none" stroke="#111" stroke-width="1.4"/><g fill="#fff" stroke="#22f" stroke-width="1"><rect x="-9.5" y="-6.5" width="3" height="3"/><rect x="6.5" y="-6.5" width="3" height="3"/><rect x="-9.5" y="3.5" width="3" height="3"/><rect x="6.5" y="3.5" width="3" height="3"/><rect x="-1" y="-1" width="2" height="2"/></g></svg>
<div class="a" style="left:62px;top:14px;width:31px;height:25px;background:#f0f0f0;border:1px solid #c6c6c6"></div>
<svg class="a" style="left:64.5px;top:15.5px" width="26" height="22" viewBox="-13.0 -11.0 26 22"><circle r="8" fill="none" stroke="#888" stroke-width=".8"/><path d="M-9 0 H9 M0 -9 V9" stroke="#22f" stroke-width="1.1"/><path d="M0 0 L7 -7" stroke="#22f" stroke-width="1"/></svg>
<div class="a" style="left:0px;top:39px;width:31px;height:25px;background:#f0f0f0;border:1px solid #c6c6c6"></div>
<svg class="a" style="left:2.5px;top:40.5px" width="26" height="22" viewBox="-13.0 -11.0 26 22"><rect x="-10" y="-3" width="6" height="6" fill="none" stroke="#111" stroke-width="1.3"/><circle cx="-7" cy="0" r=".8" fill="#22f"/><path d="M-4 0 H10" stroke="#22f" stroke-width="1.1" stroke-dasharray="2 2"/></svg>
<div class="a" style="left:31px;top:39px;width:31px;height:25px;background:#f0f0f0;border:1px solid #c6c6c6"></div>
<svg class="a" style="left:33.5px;top:40.5px" width="26" height="22" viewBox="-13.0 -11.0 26 22"><path d="M-10 -5 L9 6" stroke="#111" stroke-width="1.2"/><path d="M-8 -9 L6 -3 M-8 -10 V-8 M6 -4 V-2" stroke="#55f" stroke-width=".9"/><rect x="-2" y="-2" width="3" height="3" fill="#fff" stroke="#22f" stroke-width=".9"/></svg>
<div class="a" style="left:62px;top:39px;width:31px;height:25px;background:#f0f0f0;border:1px solid #c6c6c6"></div>
<svg class="a" style="left:64.5px;top:40.5px" width="26" height="22" viewBox="-13.0 -11.0 26 22"><path d="M-8 2 L-4 -5 L4 0 L0 7Z" fill="none" stroke="#111" stroke-width="1.3"/><path d="M-5 -8 L11 3" stroke="#22f" stroke-width="1.1" stroke-dasharray="2 1.8"/></svg>
<div class="a" style="left:93px;top:14px;width:10px;height:25px;background:#f0f0f0;border:1px solid #c6c6c6"></div><div class="a" style="left:93px;top:39px;width:10px;height:25px;background:#f0f0f0;border:1px solid #c6c6c6"></div>
</div>
<!-- ATTRIBUTES / OBJ INFO -->
<div class="pal" style="left:812px;top:352px;width:330px;height:601px">
<div class="a" style="left:0;top:0;width:330px;height:15px;background:#f6f6f6;border-bottom:1px solid #dedede"></div>
<div class="a" style="left:0;top:15px;width:98px;height:16px;background:linear-gradient(#d9d9d9,#cecece)"></div>
<svg class="a" style="left:5px;top:19px" width="9" height="9" viewBox="0 0 9 9"><path d="M1 1 L8 8 M8 1 L1 8" stroke="#8c8c8c" stroke-width="1.6"/></svg>
<div class="t" style="left:19px;top:17px;font-size:12px">Attributes</div>
<div class="a" style="left:98px;top:15px;width:6px;height:586px;background:#bdbdbd"></div>
<div class="a" style="left:104px;top:15px;width:226px;height:16px;background:linear-gradient(#d9d9d9,#cecece)"></div>
<svg class="a" style="left:109px;top:19px" width="9" height="9" viewBox="0 0 9 9"><path d="M1 1 L8 8 M8 1 L1 8" stroke="#8c8c8c" stroke-width="1.6"/></svg>
<div class="t" style="left:123px;top:17px;font-size:12px">Obj Info</div>
<div class="a" style="left:31px;top:44px;width:57px;height:17px;background:#fff;border:1px solid #c4c4c4;border-radius:4px;overflow:hidden"><div class="a" style="left:41px;top:-1px;width:16px;height:17px;background:linear-gradient(#6aa7ff,#2f6ff0)"></div></div><div class="a" style="left:38px;top:46px;width:13px;height:13px;border:1.5px solid #111;background:#fff"></div><svg class="a" style="left:40px;top:48px" width="9" height="9" viewBox="0 0 9 9"><path d="M1.5 8 Q1.5 3 6 3" fill="none" stroke="#111" stroke-width="2"/><path d="M4.5 0.5 L8.5 3 L4.5 5.5Z" fill="#111"/></svg><div class="t" style="left:57px;top:47px;font-size:12px">C.</div><svg class="a" style="left:76px;top:47px" width="8" height="11" viewBox="0 0 8 11"><path d="M1 4 L4 1 L7 4 M1 7 L4 10 L7 7" fill="none" stroke="#fff" stroke-width="1.3"/></svg>
<div class="a" style="left:31px;top:193px;width:57px;height:17px;background:#fff;border:1px solid #c4c4c4;border-radius:4px;overflow:hidden"><div class="a" style="left:41px;top:-1px;width:16px;height:17px;background:linear-gradient(#6aa7ff,#2f6ff0)"></div></div><div class="a" style="left:38px;top:195px;width:13px;height:13px;border:1.5px solid #111;background:#fff"></div><svg class="a" style="left:40px;top:197px" width="9" height="9" viewBox="0 0 9 9"><path d="M1.5 8 Q1.5 3 6 3" fill="none" stroke="#111" stroke-width="2"/><path d="M4.5 0.5 L8.5 3 L4.5 5.5Z" fill="#111"/></svg><div class="t" style="left:57px;top:196px;font-size:12px">C.</div><svg class="a" style="left:76px;top:196px" width="8" height="11" viewBox="0 0 8 11"><path d="M1 4 L4 1 L7 4 M1 7 L4 10 L7 7" fill="none" stroke="#fff" stroke-width="1.3"/></svg>
<svg class="a" style="left:7px;top:46px" width="16" height="15" viewBox="0 0 16 15"><path d="M2 9 L6 2 L13 6 L9 13Z" fill="#ddd" stroke="#333" stroke-width="1"/><path d="M4 3 Q2 0 5 1" fill="none" stroke="#333"/><path d="M12 6 Q15 8 13 11" fill="none" stroke="#111" stroke-width="1.8"/></svg>
<svg class="a" style="left:7px;top:194px" width="16" height="15" viewBox="0 0 16 15"><path d="M3 12 L12 2 L14 4 L5 13Z" fill="#d8d4f6" stroke="#444" stroke-width=".8"/><path d="M1 14 H14" stroke="#333" stroke-width="1.2"/></svg>
<div class="a" style="left:8px;top:238px;width:81px;height:68px;background:#fff;border:1px solid #aaa"></div>
<div class="a" style="left:10px;top:240px;width:77px;height:64px;background:#9b00ae"></div>
<svg class="a" style="left:42px;top:264px" width="12" height="14" viewBox="0 0 12 14"><path d="M3 11 Q2 5 8 4" fill="none" stroke="#caa" stroke-width="3.5"/><path d="M3 11 Q2 5 8 4" fill="none" stroke="#222" stroke-width="2"/><path d="M6 1 L10 4 L6 7Z" fill="#222"/></svg>
<div class="a" style="left:8px;top:318px;width:81px;height:41px;background:linear-gradient(#efefef,#f6f6f6);border:1px solid #b9b9b9"></div>
<div class="t" style="left:8px;top:334px;width:81px;text-align:center;font-size:12px">100%/100%</div>
<div class="t" style="left:10px;top:394px;font-size:12px">Drop...</div>
<div class="a" style="left:55px;top:397px;width:34px;height:14px;background:#f1f1f1;border:1px solid #b5b5b5"></div><div class="a" style="left:72px;top:398px;width:1px;height:12px;background:#b5b5b5"></div>
<div class="a" style="left:62px;top:399px;width:6px;height:6px;border:1px solid #999;background:#fff"></div><div class="t" style="left:77px;top:400px;font-size:9px">..</div>
<div class="a" style="left:8px;top:456px;width:81px;height:15px;background:#fff;border:1px solid #c4c4c4;border-radius:4px;overflow:hidden"><div class="a" style="left:68px;top:-1px;width:13px;height:15px;background:linear-gradient(#6aa7ff,#2f6ff0)"></div></div>
<div class="a" style="left:18px;top:463px;width:11px;height:1px;background:#111"></div><div class="a" style="left:34px;top:463px;width:13px;height:1px;background:#111"></div>
<div class="t" style="left:51px;top:458px;font-size:10.5px">0.13</div>
<svg class="a" style="left:79px;top:458px" width="7" height="11" viewBox="0 0 7 11"><path d="M1 4 L3.5 1.5 L6 4 M1 7 L3.5 9.5 L6 7" fill="none" stroke="#fff" stroke-width="1.2"/></svg>
<div class="a" style="left:5px;top:534px;width:13px;height:46px;background:linear-gradient(#f0f0f0,#e4e4e4);border:1px solid #aaa"></div>
<div class="a" style="left:18px;top:534px;width:20px;height:46px;background:linear-gradient(#f0f0f0,#e4e4e4);border:1px solid #aaa"></div>
<div class="a" style="left:38px;top:540px;width:21px;height:40px;background:linear-gradient(#f0f0f0,#e4e4e4);border:1px solid #aaa"></div>
<div class="a" style="left:59px;top:534px;width:20px;height:46px;background:linear-gradient(#f0f0f0,#e4e4e4);border:1px solid #aaa"></div>
<div class="a" style="left:79px;top:534px;width:14px;height:46px;background:linear-gradient(#f0f0f0,#e4e4e4);border:1px solid #aaa"></div>
<svg class="a" style="left:9px;top:556px" width="6" height="4" viewBox="0 0 6 4"><path d="M0 0 H6 L3 4Z" fill="#111"/></svg>
<svg class="a" style="left:83px;top:556px" width="6" height="4" viewBox="0 0 6 4"><path d="M0 0 H6 L3 4Z" fill="#111"/></svg>
<svg class="a" style="left:24px;top:551px" width="8" height="10" viewBox="0 0 8 10"><path d="M2 9 Q1 4 5 3" fill="none" stroke="#111" stroke-width="1.8"/><path d="M4 0.5 L7.5 3 L4 5.5Z" fill="#111"/></svg>
<svg class="a" style="left:65px;top:551px" width="8" height="10" viewBox="0 0 8 10"><path d="M2 9 Q1 4 5 3" fill="none" stroke="#111" stroke-width="1.8"/><path d="M4 0.5 L7.5 3 L4 5.5Z" fill="#111"/></svg>
<svg class="a" style="left:41px;top:555px" width="14" height="7" viewBox="0 0 14 7"><rect x="0.7" y="0.7" width="7" height="5.6" rx="2.8" fill="none" stroke="#333" stroke-width="1.2"/><rect x="6.3" y="0.7" width="7" height="5.6" rx="2.8" fill="none" stroke="#333" stroke-width="1.2"/></svg>
<div class="a" style="left:3px;top:587px;width:90px;height:1px;background:#d6d6d6"></div>
<div class="a" style="left:39px;top:588px;width:19px;height:7px;background:#f8f8f8;border:1px solid #bbb"></div><svg class="a" style="left:45px;top:590px" width="7" height="4" viewBox="0 0 7 4"><path d="M0 0 H7 L3.5 4Z" fill="#111"/></svg>
<div class="a" style="left:104px;top:31px;width:226px;height:13px;background:#ececec"></div>
<div class="a" style="left:104px;top:43px;width:226px;height:1px;background:#d0d0d0"></div>
<div class="a" style="left:149px;top:35px;width:136px;height:15px;background:#fff;border:1px solid #c2c2c2;border-radius:4px;overflow:hidden"><div class="a" style="left:0;top:0;width:47px;height:15px;background:linear-gradient(#6aa7ff,#3a78f2)"></div><div class="a" style="left:85px;top:0;width:1px;height:15px;background:#d0d0d0"></div></div>
<div class="t" style="left:156px;top:37px;font-size:11px;color:#fff">Shape</div>
<div class="t" style="left:205px;top:37px;font-size:11px">Data</div>
<div class="t" style="left:244px;top:37px;font-size:11px">Render</div>
<div class="a" style="left:317px;top:32px;width:10px;height:10px;background:#f6f6f6;border:1px solid #aaa"></div><svg class="a" style="left:321px;top:34px" width="4" height="6" viewBox="0 0 4 6"><path d="M0 0 L4 3 L0 6Z" fill="#111"/></svg>
<div class="a" style="left:104px;top:51px;width:226px;height:21px;background:#e6e6e6;border-bottom:1px solid #c9c9c9"></div>
<div class="t" style="left:106px;top:57px;font-size:10.7px;font-weight:bold">No Selection</div>
<div class="a" style="left:104px;top:72px;width:226px;height:487px;background:#ececec"></div>
<div class="a" style="left:104px;top:559px;width:226px;height:1px;background:#c8c8c8"></div><div class="a" style="left:104px;top:565px;width:226px;height:1px;background:#dadada"></div>
<div class="a" style="left:107px;top:568px;width:33px;height:12px;border:1px solid #c9c9c9;background:#f0f0f0"></div><div class="t" style="left:110px;top:569px;font-size:10px;color:#b0b0b0">IFC...</div>
<div class="t" style="left:109px;top:585px;font-size:9.5px">Name:</div>
<div class="a" style="left:144px;top:583px;width:183px;height:16px;background:#fff;border:1px solid #c4c4c4"></div>
<div class="a" style="left:100px;top:298px;width:2px;height:2px;background:#666"></div>
<div class="a" style="left:100px;top:303px;width:2px;height:2px;background:#666"></div>
<div class="a" style="left:100px;top:308px;width:2px;height:2px;background:#666"></div>
</div>
<!-- NAVIGATION -->
<div class="pal" style="left:1147px;top:405px;width:296px;height:795px;border-right:3px solid #c4c4c4">
<div class="pt" style="height:16px"><svg class="x" width="9" height="9" viewBox="0 0 9 9"><path d="M1 1 L8 8 M8 1 L1 8" stroke="#8c8c8c" stroke-width="1.6"/></svg><svg class="p" width="9" height="9" viewBox="0 0 9 9"><path d="M4.5 0.5 V8.5 M0.5 4.5 H8.5" stroke="#8c8c8c" stroke-width="1.8"/></svg><div class="n" style="font-size:11.8px">Navigation - Design Layers</div></div>
<div class="a" style="left:3px;top:30px;width:290px;height:760px;background:#e4e4e4;border:1px solid #d6d6d6;border-radius:5px"></div>
<div class="a" style="left:277px;top:18px;width:12px;height:10px;background:#f6f6f6;border:1px solid #aaa"></div><svg class="a" style="left:281px;top:20px" width="4" height="6" viewBox="0 0 4 6"><path d="M0 0 L4 3 L0 6Z" fill="#111"/></svg>
<div class="a" style="left:64px;top:22px;width:168px;height:17px;background:#fff;border:1px solid #c2c2c2;border-radius:4px;overflow:hidden"><div class="a" style="left:27px;top:0;width:28px;height:17px;background:#ececec"></div></div>
<div class="a" style="left:92px;top:23px;width:1px;height:15px;background:#dadada"></div>
<div class="a" style="left:120px;top:23px;width:1px;height:15px;background:#dadada"></div>
<div class="a" style="left:148px;top:23px;width:1px;height:15px;background:#dadada"></div>
<div class="a" style="left:176px;top:23px;width:1px;height:15px;background:#dadada"></div>
<div class="a" style="left:204px;top:23px;width:1px;height:15px;background:#dadada"></div>
<svg class="a" style="left:71px;top:24px" width="14" height="14" viewBox="0 0 14 14"><g fill="none" stroke="#444" stroke-width="1"><rect x="0.5" y="5.5" width="2.5" height="2.5"/><rect x="5" y="4" width="2.5" height="2.5"/><rect x="5" y="8.5" width="2.5" height="2.5"/><rect x="11" y="1" width="2.5" height="2.5"/><rect x="11" y="6" width="2.5" height="2.5"/><path d="M3 7 H5 M7.5 5 H11 M7.5 10 H9 V2 H11 M9 7 H11"/></g></svg>
<svg class="a" style="left:99px;top:24px" width="14" height="14" viewBox="0 0 14 14"><g fill="#f4f4f4" stroke="#333" stroke-width="1"><path d="M1 9 L7 12 L13 9 L7 6Z"/><path d="M1 6.5 L7 9.5 L13 6.5 L7 3.5Z"/><path d="M1 4 L7 7 L13 4 L7 1Z"/></g></svg>
<svg class="a" style="left:127px;top:24px" width="14" height="14" viewBox="0 0 14 14"><rect x="1" y="1" width="11" height="11" fill="#fff" stroke="#222" stroke-width="1.2"/><rect x="3" y="3" width="5" height="4" fill="none" stroke="#6a8fd0" stroke-dasharray="1 1"/><rect x="8" y="8" width="4" height="4" fill="#222"/><rect x="9" y="9" width="2" height="2" fill="#fff"/></svg>
<svg class="a" style="left:155px;top:24px" width="14" height="14" viewBox="0 0 14 14"><rect x="2" y="2" width="10" height="9" fill="#fff" stroke="#333"/><path d="M2 11 V7 L5 5 L8 8 L12 5 V11Z" fill="#a99ce6"/><path d="M0 3 V0 H3 M11 0 H14 V3 M14 10 V13 H11 M3 13 H0 V10" fill="none" stroke="#111" stroke-width="1.5"/></svg>
<svg class="a" style="left:183px;top:24px" width="14" height="14" viewBox="0 0 14 14"><path d="M2 0.5 H8 L11.5 4 V13 H2Z" fill="#fff" stroke="#555"/><path d="M2 13 V8 L5 6 L8 9 L11.5 6 V13Z" fill="#a99ce6"/></svg>
<svg class="a" style="left:211px;top:24px" width="14" height="14" viewBox="0 0 14 14"><path d="M4 0.5 H10 L13 3.5 V13 H4Z" fill="#fff" stroke="#555"/><path d="M1 12 Q1 7 6 7" fill="none" stroke="#111" stroke-width="1.8"/><path d="M5 4.5 L9 7 L5 9.5Z" fill="#111"/></svg>
<div class="t" style="left:4px;top:51px;font-size:9.9px">Layer Options:</div>
<div class="a" style="left:77px;top:48px;width:210px;height:15px;background:#fff;border:1px solid #c4c4c4;border-radius:4px"></div>
<div class="t" style="left:86px;top:51px;font-size:9.9px">Show/Snap Others</div>
<svg class="a" style="left:278px;top:50px" width="7" height="11" viewBox="0 0 7 11"><path d="M1 4 L3.5 1.5 L6 4 M1 7 L3.5 9.5 L6 7" fill="none" stroke="#222" stroke-width="1.1"/></svg>
<div class="a" style="left:3px;top:71px;width:290px;height:724px;background:#fff;border:1px solid #d0d0d0"></div>
<div class="a" style="left:4px;top:86px;width:288px;height:1px;background:#d6d6d6"></div>
<div class="a" style="left:53px;top:74px;width:1px;height:11px;background:#d8d8d8"></div>
<div class="a" style="left:81px;top:74px;width:1px;height:11px;background:#d8d8d8"></div>
<div class="a" style="left:209px;top:74px;width:1px;height:11px;background:#d8d8d8"></div>
<div class="a" style="left:237px;top:74px;width:1px;height:11px;background:#d8d8d8"></div>
<div class="a" style="left:270px;top:74px;width:1px;height:11px;background:#d8d8d8"></div>
<div class="t" style="left:5px;top:74px;font-size:9.9px;color:#222">Visibility</div>
<div class="t" style="left:86px;top:74px;font-size:9.9px;color:#222">Design Layer Name</div>
<div class="t" style="left:215px;top:74px;font-size:9.9px;color:#222">#</div>
<div class="t" style="left:242px;top:74px;font-size:9.9px;color:#222">Story</div>
<div class="a" style="left:19px;top:87px;width:1px;height:708px;background:#e6e6e6"></div>
<div class="a" style="left:35px;top:87px;width:1px;height:708px;background:#e6e6e6"></div>
<div class="a" style="left:52px;top:87px;width:1px;height:708px;background:#e6e6e6"></div>
<div class="t" style="left:85px;top:90px;font-size:9.9px">Notes</div>
<div class="t" style="left:214px;top:90px;font-size:9.9px">1</div>
<svg class="a" style="left:22px;top:91px" width="9" height="9" viewBox="0 0 9 9"><path d="M1 1 L8 8 M8 1 L1 8" stroke="#555" stroke-width="1.3"/></svg>
<div class="t" style="left:85px;top:105px;font-size:9.9px">Standard items</div>
<div class="t" style="left:214px;top:105px;font-size:9.9px">2</div>
<svg class="a" style="left:22px;top:106px" width="9" height="9" viewBox="0 0 9 9"><path d="M1 1 L8 8 M8 1 L1 8" stroke="#555" stroke-width="1.3"/></svg>
<div class="t" style="left:85px;top:120px;font-size:9.9px">Prop Electrical Plan</div>
<div class="t" style="left:214px;top:120px;font-size:9.9px">3</div>
<svg class="a" style="left:22px;top:121px" width="9" height="9" viewBox="0 0 9 9"><path d="M1 1 L8 8 M8 1 L1 8" stroke="#555" stroke-width="1.3"/></svg>
<div class="t" style="left:85px;top:135px;font-size:9.9px">Prop Roof Plan</div>
<div class="t" style="left:214px;top:135px;font-size:9.9px">4</div>
<svg class="a" style="left:22px;top:136px" width="9" height="9" viewBox="0 0 9 9"><path d="M1 1 L8 8 M8 1 L1 8" stroke="#555" stroke-width="1.3"/></svg>
<div class="t" style="left:85px;top:150px;font-size:9.9px">Prop FF Plan</div>
<div class="t" style="left:214px;top:150px;font-size:9.9px">5</div>
<svg class="a" style="left:22px;top:151px" width="9" height="9" viewBox="0 0 9 9"><path d="M1 1 L8 8 M8 1 L1 8" stroke="#555" stroke-width="1.3"/></svg>
<div class="t" style="left:85px;top:165px;font-size:9.9px;font-weight:bold">Prop GF Plan</div>
<div class="t" style="left:214px;top:165px;font-size:9.9px">6</div>
<svg class="a" style="left:3px;top:166px" width="12" height="8" viewBox="0 0 12 8"><ellipse cx="6" cy="4" rx="5.5" ry="3.5" fill="#ccc" stroke="#333"/><circle cx="6" cy="4" r="1.8" fill="#333"/><path d="M1 4 H11" stroke="#333" stroke-width=".7"/></svg>
<svg class="a" style="left:59px;top:165px" width="12" height="11" viewBox="0 0 12 11"><path d="M1 6 L4.5 10 L11 1" fill="none" stroke="#222" stroke-width="2"/></svg>
<div class="t" style="left:85px;top:180px;font-size:9.9px">Prop Foundation Plan</div>
<div class="t" style="left:214px;top:180px;font-size:9.9px">7</div>
<svg class="a" style="left:22px;top:181px" width="9" height="9" viewBox="0 0 9 9"><path d="M1 1 L8 8 M8 1 L1 8" stroke="#555" stroke-width="1.3"/></svg>
<div class="t" style="left:85px;top:195px;font-size:9.9px">Prop Site Plan</div>
<div class="t" style="left:214px;top:195px;font-size:9.9px">8</div>
<svg class="a" style="left:22px;top:196px" width="9" height="9" viewBox="0 0 9 9"><path d="M1 1 L8 8 M8 1 L1 8" stroke="#555" stroke-width="1.3"/></svg>
<div class="a" style="left:4px;top:208px;width:288px;height:15px;background:#dcdcdc"></div>
<div class="t" style="left:85px;top:211px;font-size:9.9px;font-style:italic">Ex Site Plan</div>
<div class="t" style="left:214px;top:210px;font-size:9.9px">9</div>
<svg class="a" style="left:22px;top:211px" width="9" height="9" viewBox="0 0 9 9"><path d="M1 1 L8 8 M8 1 L1 8" stroke="#555" stroke-width="1.3"/></svg>
<div class="t" style="left:85px;top:226px;font-size:9.9px;font-style:italic">Location Plan</div>
<div class="t" style="left:214px;top:225px;font-size:9.9px">10</div>
<svg class="a" style="left:22px;top:226px" width="9" height="9" viewBox="0 0 9 9"><path d="M1 1 L8 8 M8 1 L1 8" stroke="#555" stroke-width="1.3"/></svg>
<div class="t" style="left:85px;top:240px;font-size:9.9px">HSE</div>
<div class="t" style="left:214px;top:240px;font-size:9.9px">11</div>
<svg class="a" style="left:22px;top:241px" width="9" height="9" viewBox="0 0 9 9"><path d="M1 1 L8 8 M8 1 L1 8" stroke="#555" stroke-width="1.3"/></svg>
</div>
</body></html>
